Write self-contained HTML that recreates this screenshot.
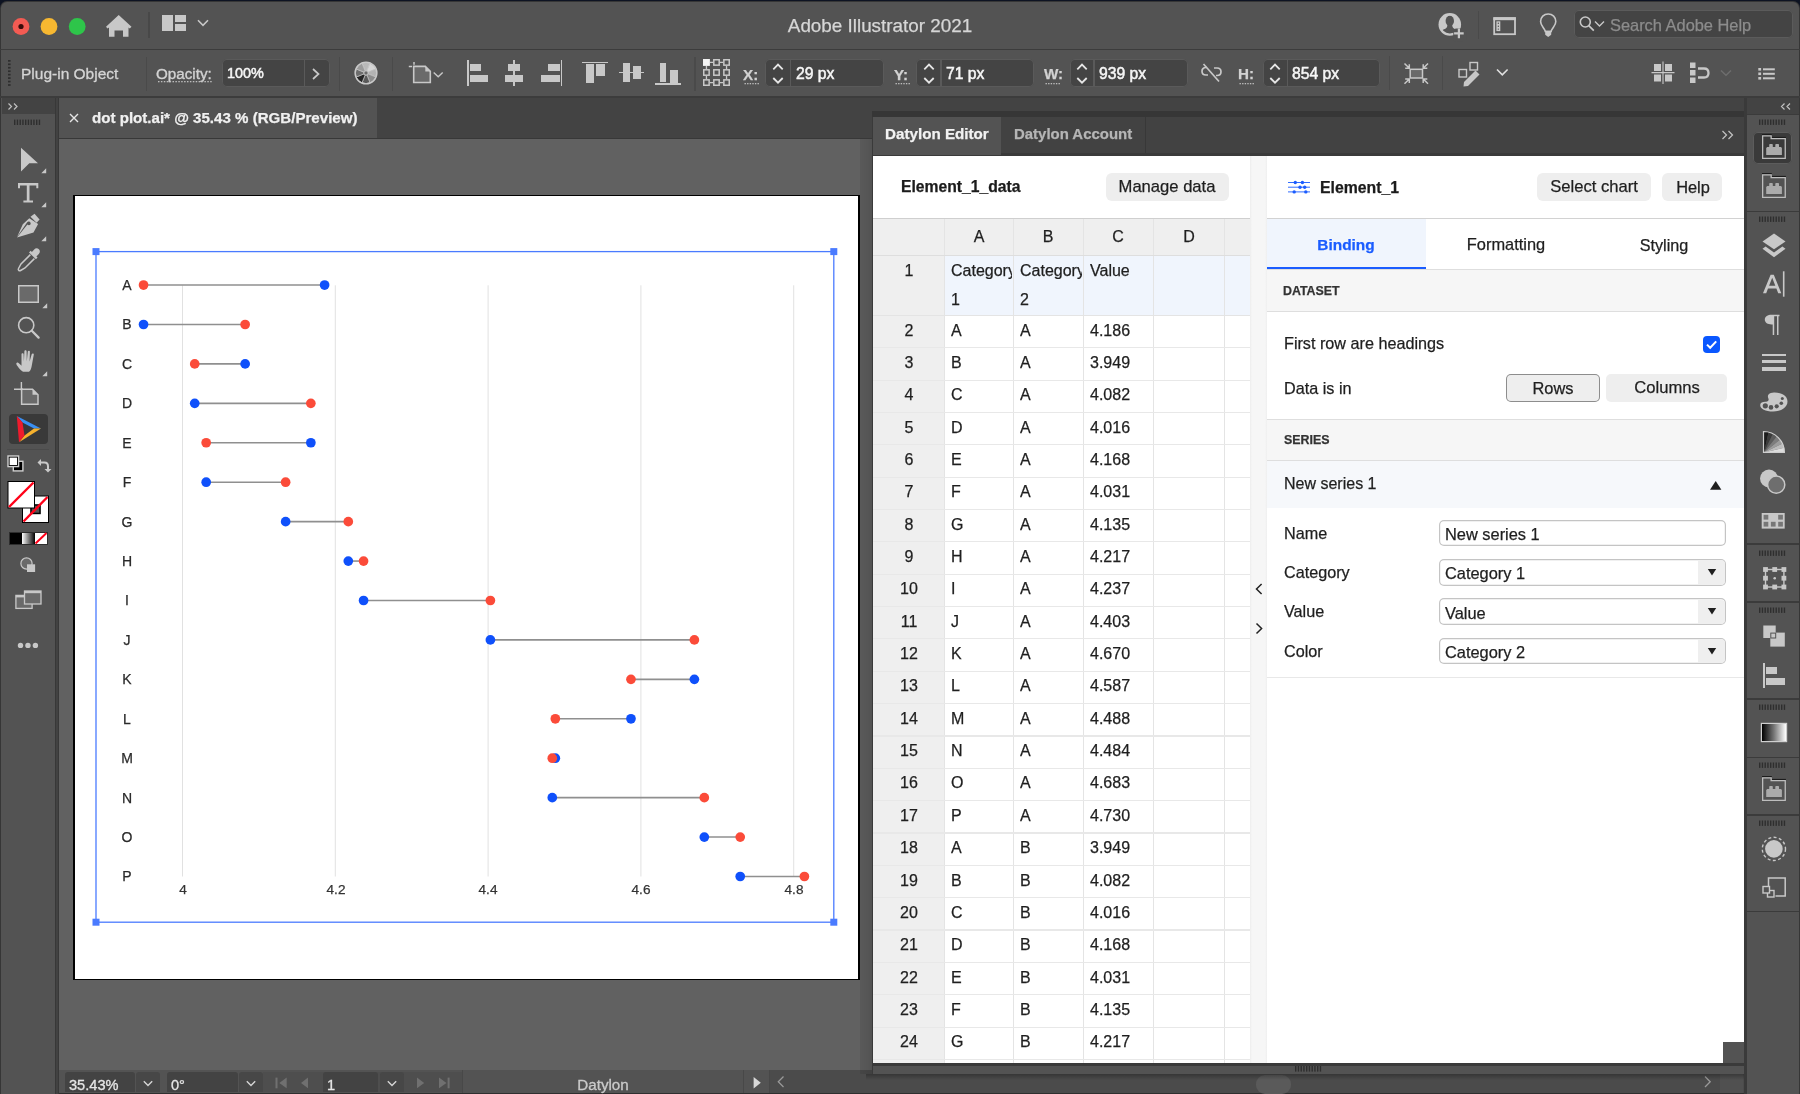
<!DOCTYPE html>
<html><head><meta charset="utf-8"><title>Adobe Illustrator 2021</title>
<style>
html,body{margin:0;padding:0;width:1800px;height:1094px;overflow:hidden;background:#535353;}
body{position:relative;font-family:"Liberation Sans",sans-serif;}
.a{position:absolute;}
.t{line-height:1;white-space:nowrap;will-change:transform;-webkit-text-stroke-width:0.25px;}
svg.a{overflow:visible;}
</style></head><body>
<div class="a" style="left:0.00px;top:0.00px;width:1800.00px;height:1094.00px;background:#0d1322;"></div>
<div class="a" style="left:0.00px;top:1.40px;width:1800.00px;height:1092.60px;background:#363636;border-radius:7px 7px 0 0;"></div>
<div class="a" style="left:1.10px;top:1.60px;width:1797.60px;height:1092.40px;background:#535353;border-radius:6px 6px 0 0;"></div>
<div class="a" style="left:0.00px;top:48.50px;width:1800.00px;height:1.60px;background:#3c3c3c;"></div>
<div class="a" style="left:0.00px;top:96.30px;width:1800.00px;height:1.30px;background:#3c3c3c;"></div>
<div class="a" style="left:58.00px;top:97.50px;width:1688.00px;height:40.50px;background:#434343;"></div>
<div class="a" style="left:55.00px;top:97.50px;width:3.50px;height:997.00px;background:#383838;"></div>
<div class="a" style="left:55.80px;top:97.50px;width:1.90px;height:997.00px;background:#424242;"></div>
<div class="a" style="left:1.50px;top:97.50px;width:53.50px;height:16.50px;background:#434343;"></div>
<div class="a" style="left:58.50px;top:139.00px;width:814.00px;height:931.00px;background:#616161;"></div>
<div class="a" style="left:58.50px;top:137.60px;width:1686.00px;height:1.50px;background:#383838;"></div>
<svg class="a" style="left:0px;top:0px;" width="100" height="50" viewBox="0 0 100 50">
<circle cx="21" cy="26.5" r="8.4" fill="#f35b53"/>
<circle cx="21" cy="26.5" r="2.6" fill="#3a0d0b"/>
<circle cx="49" cy="26.5" r="8.4" fill="#f7b831"/>
<circle cx="77.2" cy="26.5" r="8.4" fill="#2ec54a"/>
</svg>
<svg class="a" style="left:104px;top:12px;" width="32" height="28" viewBox="0 0 32 28">
<path d="M14.7 3 L27.5 14.8 L25.8 16.5 L24.5 15.5 L24.5 24.7 L19 24.7 L19 18.5 L10.5 18.5 L10.5 24.7 L5 24.7 L5 15.5 L3.5 16.5 L2 14.8 Z" fill="#c8c8c8"/>
</svg>
<div class="a" style="left:148.30px;top:11.70px;width:1.30px;height:26.60px;background:#484848;"></div>
<div class="a" style="left:161.70px;top:15.30px;width:11.30px;height:15.50px;background:#c8c8c8;"></div>
<div class="a" style="left:174.80px;top:15.30px;width:11.00px;height:7.10px;background:#c8c8c8;"></div>
<div class="a" style="left:174.80px;top:24.00px;width:11.00px;height:6.80px;background:#c8c8c8;"></div>
<svg class="a" style="left:196px;top:18px;" width="14" height="10" viewBox="0 0 14 10"><path d="M2 2.3 L7 7.3 L12 2.3" stroke="#c8c8c8" stroke-width="1.6" fill="none"/></svg>
<div class="a t" style="left:679.60px;top:17.14px;width:400px;text-align:center;font-size:18.85px;color:#d6d6d6;-webkit-text-stroke:0.25px #d6d6d6;">Adobe Illustrator 2021</div>
<svg class="a" style="left:1436px;top:10px;" width="32" height="32" viewBox="0 0 32 32">
<defs><clipPath id="ucl"><circle cx="13.8" cy="14.4" r="9.1"/></clipPath></defs>
<circle cx="13.8" cy="14.4" r="11.3" fill="#c8c8c8"/>
<g clip-path="url(#ucl)">
<ellipse cx="13.8" cy="10.9" rx="4.2" ry="5.1" fill="#535353"/>
<path d="M11.3 14.5 C11.5 17 11 18.3 7.5 19.6 C5.5 20.3 3.7 21.3 3 24 L3 30 L25 30 L24.6 24 C23.9 21.3 22.1 20.3 20.1 19.6 C16.6 18.3 16.1 17 16.3 14.5 Z" fill="#535353"/>
</g>
<rect x="17.3" y="18.6" width="13" height="13" rx="3" fill="#535353"/>
<path d="M22.9 18.6 V28.2 M18.1 23.4 H27.7" stroke="#c8c8c8" stroke-width="2.2"/>
</svg>
<div class="a" style="left:1477.50px;top:11.00px;width:1.50px;height:27.50px;background:#4a4a4a;"></div>
<svg class="a" style="left:1492px;top:16px;" width="26" height="21" viewBox="0 0 26 21">
<rect x="2.2" y="2.2" width="20.8" height="16" fill="none" stroke="#c8c8c8" stroke-width="1.8"/>
<rect x="1.4" y="1.2" width="22.4" height="3" fill="#c8c8c8"/>
<rect x="4.4" y="5.3" width="3.9" height="9.8" fill="#c8c8c8"/>
<circle cx="6.35" cy="7.3" r="0.7" fill="#535353"/><circle cx="6.35" cy="10.2" r="0.7" fill="#535353"/><circle cx="6.35" cy="13.1" r="0.7" fill="#535353"/>
</svg>
<svg class="a" style="left:1538px;top:12px;" width="20" height="27" viewBox="0 0 20 27">
<path d="M10.2 2 C5.8 2 2.6 5.3 2.6 9.6 C2.6 12.5 4.2 14.2 5.6 16.2 C6.6 17.6 7.3 18.5 7.3 19.5 L13.1 19.5 C13.1 18.5 13.8 17.6 14.8 16.2 C16.2 14.2 17.8 12.5 17.8 9.6 C17.8 5.3 14.6 2 10.2 2 Z" fill="none" stroke="#c8c8c8" stroke-width="1.6"/>
<path d="M7.2 18.8 L13.2 18.8 L13.2 22.8 L10.2 25 L7.2 22.8 Z" fill="#c8c8c8"/>
</svg>
<div class="a" style="left:1574.20px;top:10.30px;width:218.80px;height:28.20px;background:#444444;border-radius:5px;box-shadow:inset 0 0 0 1px #5b5b5b;"></div>
<svg class="a" style="left:1576px;top:12px;" width="32" height="24" viewBox="0 0 32 24">
<circle cx="9.3" cy="10" r="5" fill="none" stroke="#c8c8c8" stroke-width="1.6"/>
<path d="M12.8 13.6 L17.8 18.6" stroke="#c8c8c8" stroke-width="1.7"/>
<path d="M19 9.5 L23.5 14 L28 9.5" fill="none" stroke="#c8c8c8" stroke-width="1.4"/>
</svg>
<div class="a t" style="left:1610.10px;top:17.12px;font-size:16.4px;color:#8c8c8c;-webkit-text-stroke:0.25px #8c8c8c;">Search Adobe Help</div>
<svg class="a" style="left:6px;top:58px;" width="8" height="32" viewBox="0 0 8 32"><rect x="2" y="2.00" width="2.6" height="1.7" fill="#2e2e2e"/><rect x="2" y="5.45" width="2.6" height="1.7" fill="#2e2e2e"/><rect x="2" y="8.90" width="2.6" height="1.7" fill="#2e2e2e"/><rect x="2" y="12.35" width="2.6" height="1.7" fill="#2e2e2e"/><rect x="2" y="15.80" width="2.6" height="1.7" fill="#2e2e2e"/><rect x="2" y="19.25" width="2.6" height="1.7" fill="#2e2e2e"/><rect x="2" y="22.70" width="2.6" height="1.7" fill="#2e2e2e"/><rect x="2" y="26.15" width="2.6" height="1.7" fill="#2e2e2e"/></svg>
<div class="a t" style="left:20.60px;top:66.28px;font-size:15.5px;color:#d4d4d4;-webkit-text-stroke:0.3px #d4d4d4;">Plug-in Object</div>
<div class="a" style="left:145.80px;top:56.70px;width:1.20px;height:34.00px;background:#4a4a4a;"></div>
<div class="a t" style="left:156.40px;top:65.53px;font-size:15.2px;color:#d2d2d2;-webkit-text-stroke:0.35px #d2d2d2;">Opacity:</div>
<svg class="a" style="left:157px;top:80px;" width="58" height="4" viewBox="0 0 58 4"><rect x="1.00" y="1" width="1.5" height="1.3" fill="#bdbdbd"/><rect x="3.90" y="1" width="1.5" height="1.3" fill="#bdbdbd"/><rect x="6.80" y="1" width="1.5" height="1.3" fill="#bdbdbd"/><rect x="9.70" y="1" width="1.5" height="1.3" fill="#bdbdbd"/><rect x="12.60" y="1" width="1.5" height="1.3" fill="#bdbdbd"/><rect x="15.50" y="1" width="1.5" height="1.3" fill="#bdbdbd"/><rect x="18.40" y="1" width="1.5" height="1.3" fill="#bdbdbd"/><rect x="21.30" y="1" width="1.5" height="1.3" fill="#bdbdbd"/><rect x="24.20" y="1" width="1.5" height="1.3" fill="#bdbdbd"/><rect x="27.10" y="1" width="1.5" height="1.3" fill="#bdbdbd"/><rect x="30.00" y="1" width="1.5" height="1.3" fill="#bdbdbd"/><rect x="32.90" y="1" width="1.5" height="1.3" fill="#bdbdbd"/><rect x="35.80" y="1" width="1.5" height="1.3" fill="#bdbdbd"/><rect x="38.70" y="1" width="1.5" height="1.3" fill="#bdbdbd"/><rect x="41.60" y="1" width="1.5" height="1.3" fill="#bdbdbd"/><rect x="44.50" y="1" width="1.5" height="1.3" fill="#bdbdbd"/><rect x="47.40" y="1" width="1.5" height="1.3" fill="#bdbdbd"/><rect x="50.30" y="1" width="1.5" height="1.3" fill="#bdbdbd"/><rect x="53.20" y="1" width="1.5" height="1.3" fill="#bdbdbd"/></svg>
<div class="a" style="left:221.70px;top:59.20px;width:108.00px;height:28.30px;background:#444444;border-radius:5px;box-shadow:inset 0 0 0 1px #5a5a5a;"></div>
<div class="a" style="left:303.50px;top:59.70px;width:1.50px;height:27.30px;background:#5a5a5a;"></div>
<div class="a t" style="left:226.60px;top:66.41px;font-size:14.4px;color:#f6f6f6;-webkit-text-stroke:0.5px #f6f6f6;">100%</div>
<svg class="a" style="left:310px;top:67px;" width="12" height="14" viewBox="0 0 12 14"><path d="M3 2 L8.5 7 L3 12" stroke="#c8c8c8" stroke-width="1.7" fill="none"/></svg>
<div class="a" style="left:338.50px;top:56.70px;width:1.20px;height:34.00px;background:#4a4a4a;"></div>
<svg class="a" style="left:353.5px;top:60.7px;" width="24" height="24" viewBox="0 0 24 24"><path d="M12 12 L7.94 2.21 A10.6 10.6 0 0 1 16.06 2.21 Z" fill="#b8b8b8" stroke="#c9c9c9" stroke-width="0.7"/><path d="M12 12 L16.06 2.21 A10.6 10.6 0 0 1 21.79 7.94 Z" fill="#d6d6d6" stroke="#c9c9c9" stroke-width="0.7"/><path d="M12 12 L21.79 7.94 A10.6 10.6 0 0 1 21.79 16.06 Z" fill="#b3b3b3" stroke="#c9c9c9" stroke-width="0.7"/><path d="M12 12 L21.79 16.06 A10.6 10.6 0 0 1 16.06 21.79 Z" fill="#8c8c8c" stroke="#c9c9c9" stroke-width="0.7"/><path d="M12 12 L16.06 21.79 A10.6 10.6 0 0 1 7.94 21.79 Z" fill="#5a5a5a" stroke="#c9c9c9" stroke-width="0.7"/><path d="M12 12 L7.94 21.79 A10.6 10.6 0 0 1 2.21 16.06 Z" fill="#262626" stroke="#c9c9c9" stroke-width="0.7"/><path d="M12 12 L2.21 16.06 A10.6 10.6 0 0 1 2.21 7.94 Z" fill="#6c6c6c" stroke="#c9c9c9" stroke-width="0.7"/><path d="M12 12 L2.21 7.94 A10.6 10.6 0 0 1 7.94 2.21 Z" fill="#9a9a9a" stroke="#c9c9c9" stroke-width="0.7"/><circle cx="12" cy="12" r="10.9" fill="none" stroke="#c9c9c9" stroke-width="1.4"/><circle cx="12" cy="12" r="2.2" fill="#6a6a6a" stroke="#c9c9c9" stroke-width="1"/></svg>
<div class="a" style="left:392.00px;top:56.70px;width:1.20px;height:34.00px;background:#4a4a4a;"></div>
<svg class="a" style="left:405px;top:58px;" width="44" height="30" viewBox="0 0 44 30">
<path d="M3.8 8.6 H7.1 M9 4 V6.8" stroke="#c8c8c8" stroke-width="1.5"/>
<path d="M8.7 8.4 H20.3 L25.3 13.4 V24.5 H8.7 Z" fill="#6a6a6a" stroke="#c8c8c8" stroke-width="1.6"/>
<path d="M20.3 8.4 V13.4 H25.3" fill="#c8c8c8"/>
<path d="M28.7 14.5 L33.2 18.8 L37.7 14.5" stroke="#c8c8c8" stroke-width="1.4" fill="none"/>
</svg>
<div class="a" style="left:467.00px;top:60.30px;width:1.50px;height:25.50px;background:#c8c8c8;"></div>
<div class="a" style="left:470.00px;top:63.70px;width:11.20px;height:7.10px;background:#c8c8c8;"></div>
<div class="a" style="left:470.00px;top:74.50px;width:18.00px;height:7.20px;background:#c8c8c8;"></div>
<div class="a" style="left:513.10px;top:60.30px;width:1.50px;height:25.50px;background:#c8c8c8;"></div>
<div class="a" style="left:507.80px;top:63.70px;width:12.50px;height:7.10px;background:#c8c8c8;"></div>
<div class="a" style="left:504.70px;top:74.50px;width:18.30px;height:7.20px;background:#c8c8c8;"></div>
<div class="a" style="left:560.90px;top:60.30px;width:1.50px;height:25.50px;background:#c8c8c8;"></div>
<div class="a" style="left:548.30px;top:63.70px;width:11.70px;height:7.10px;background:#c8c8c8;"></div>
<div class="a" style="left:541.00px;top:74.50px;width:19.00px;height:7.20px;background:#c8c8c8;"></div>
<div class="a" style="left:582.00px;top:61.80px;width:25.80px;height:1.50px;background:#c8c8c8;"></div>
<div class="a" style="left:586.00px;top:64.00px;width:7.70px;height:19.00px;background:#c8c8c8;"></div>
<div class="a" style="left:596.00px;top:64.00px;width:8.70px;height:11.80px;background:#c8c8c8;"></div>
<div class="a" style="left:618.70px;top:71.50px;width:25.30px;height:1.50px;background:#c8c8c8;"></div>
<div class="a" style="left:622.80px;top:63.00px;width:7.20px;height:18.70px;background:#c8c8c8;"></div>
<div class="a" style="left:632.80px;top:66.20px;width:8.20px;height:12.60px;background:#c8c8c8;"></div>
<div class="a" style="left:655.00px;top:83.10px;width:25.80px;height:1.50px;background:#c8c8c8;"></div>
<div class="a" style="left:659.70px;top:63.30px;width:6.60px;height:19.00px;background:#c8c8c8;"></div>
<div class="a" style="left:669.50px;top:70.00px;width:8.50px;height:13.00px;background:#c8c8c8;"></div>
<div class="a" style="left:694.40px;top:56.70px;width:1.20px;height:34.00px;background:#4a4a4a;"></div>
<svg class="a" style="left:702px;top:58px;" width="30" height="30" viewBox="0 0 30 30"><rect x="1.00" y="1.00" width="6.9" height="6.9" fill="#f4f4f4"/><rect x="1.75" y="11.80" width="5.4" height="5.4" fill="none" stroke="#c8c8c8" stroke-width="1.5"/><rect x="1.75" y="21.85" width="5.4" height="5.4" fill="none" stroke="#c8c8c8" stroke-width="1.5"/><rect x="11.80" y="1.75" width="5.4" height="5.4" fill="none" stroke="#c8c8c8" stroke-width="1.5"/><rect x="11.80" y="11.80" width="5.4" height="5.4" fill="none" stroke="#c8c8c8" stroke-width="1.5"/><rect x="11.80" y="21.85" width="5.4" height="5.4" fill="none" stroke="#c8c8c8" stroke-width="1.5"/><rect x="21.85" y="1.75" width="5.4" height="5.4" fill="none" stroke="#c8c8c8" stroke-width="1.5"/><rect x="21.85" y="11.80" width="5.4" height="5.4" fill="none" stroke="#c8c8c8" stroke-width="1.5"/><rect x="21.85" y="21.85" width="5.4" height="5.4" fill="none" stroke="#c8c8c8" stroke-width="1.5"/><path d="M7.9 4.45 H11.05 M17.95 4.45 H21.1 M7.9 24.55 H11.05 M17.95 24.55 H21.1 M4.45 7.9 V11.05 M4.45 17.95 V21.1 M24.55 7.9 V11.05 M24.55 17.95 V21.1" stroke="#c8c8c8" stroke-width="1.3"/></svg>
<div class="a t" style="left:743.10px;top:67.23px;font-size:15.2px;color:#d2d2d2;font-weight:bold;">X:</div>
<svg class="a" style="left:744px;top:82px;" width="20" height="4" viewBox="0 0 20 4"><rect x="0.50" y="1" width="1.4" height="1.3" fill="#bdbdbd"/><rect x="3.10" y="1" width="1.4" height="1.3" fill="#bdbdbd"/><rect x="5.70" y="1" width="1.4" height="1.3" fill="#bdbdbd"/><rect x="8.30" y="1" width="1.4" height="1.3" fill="#bdbdbd"/><rect x="10.90" y="1" width="1.4" height="1.3" fill="#bdbdbd"/><rect x="13.50" y="1" width="1.4" height="1.3" fill="#bdbdbd"/></svg>
<div class="a" style="left:765.40px;top:59.30px;width:118.60px;height:28.00px;background:#444444;border-radius:5px;box-shadow:inset 0 0 0 1px #5a5a5a;"></div>
<div class="a" style="left:789.75px;top:59.80px;width:1.50px;height:27.00px;background:#5a5a5a;"></div>
<svg class="a" style="left:770.95px;top:62.3px;" width="14" height="24" viewBox="0 0 14 24"><path d="M2.3 7.3 L7 2.6 L11.7 7.3 M2.3 16 L7 20.7 L11.7 16" stroke="#e6e6e6" stroke-width="1.8" fill="none"/></svg>
<div class="a t" style="left:795.60px;top:66.21px;font-size:15.7px;color:#f6f6f6;-webkit-text-stroke:0.5px #f6f6f6;">29 px</div>
<div class="a t" style="left:893.60px;top:67.23px;font-size:15.2px;color:#d2d2d2;font-weight:bold;">Y:</div>
<svg class="a" style="left:894.5px;top:82px;" width="20" height="4" viewBox="0 0 20 4"><rect x="0.50" y="1" width="1.4" height="1.3" fill="#bdbdbd"/><rect x="3.10" y="1" width="1.4" height="1.3" fill="#bdbdbd"/><rect x="5.70" y="1" width="1.4" height="1.3" fill="#bdbdbd"/><rect x="8.30" y="1" width="1.4" height="1.3" fill="#bdbdbd"/><rect x="10.90" y="1" width="1.4" height="1.3" fill="#bdbdbd"/><rect x="13.50" y="1" width="1.4" height="1.3" fill="#bdbdbd"/></svg>
<div class="a" style="left:916.10px;top:59.30px;width:118.10px;height:28.00px;background:#444444;border-radius:5px;box-shadow:inset 0 0 0 1px #5a5a5a;"></div>
<div class="a" style="left:940.25px;top:59.80px;width:1.50px;height:27.00px;background:#5a5a5a;"></div>
<svg class="a" style="left:921.55px;top:62.3px;" width="14" height="24" viewBox="0 0 14 24"><path d="M2.3 7.3 L7 2.6 L11.7 7.3 M2.3 16 L7 20.7 L11.7 16" stroke="#e6e6e6" stroke-width="1.8" fill="none"/></svg>
<div class="a t" style="left:946.10px;top:66.21px;font-size:15.7px;color:#f6f6f6;-webkit-text-stroke:0.5px #f6f6f6;">71 px</div>
<div class="a t" style="left:1043.60px;top:66.27px;font-size:15.2px;color:#d2d2d2;font-weight:bold;">W:</div>
<svg class="a" style="left:1044.5px;top:82px;" width="20" height="4" viewBox="0 0 20 4"><rect x="0.50" y="1" width="1.4" height="1.3" fill="#bdbdbd"/><rect x="3.10" y="1" width="1.4" height="1.3" fill="#bdbdbd"/><rect x="5.70" y="1" width="1.4" height="1.3" fill="#bdbdbd"/><rect x="8.30" y="1" width="1.4" height="1.3" fill="#bdbdbd"/><rect x="10.90" y="1" width="1.4" height="1.3" fill="#bdbdbd"/><rect x="13.50" y="1" width="1.4" height="1.3" fill="#bdbdbd"/></svg>
<div class="a" style="left:1069.50px;top:58.50px;width:118.00px;height:28.00px;background:#444444;border-radius:5px;box-shadow:inset 0 0 0 1px #5a5a5a;"></div>
<div class="a" style="left:1093.45px;top:59.00px;width:1.50px;height:27.00px;background:#5a5a5a;"></div>
<svg class="a" style="left:1074.85px;top:61.5px;" width="14" height="24" viewBox="0 0 14 24"><path d="M2.3 7.3 L7 2.6 L11.7 7.3 M2.3 16 L7 20.7 L11.7 16" stroke="#e6e6e6" stroke-width="1.8" fill="none"/></svg>
<div class="a t" style="left:1099.10px;top:66.21px;font-size:15.7px;color:#f6f6f6;-webkit-text-stroke:0.5px #f6f6f6;">939 px</div>
<div class="a t" style="left:1238.10px;top:66.27px;font-size:15.2px;color:#d2d2d2;font-weight:bold;">H:</div>
<svg class="a" style="left:1239px;top:82px;" width="20" height="4" viewBox="0 0 20 4"><rect x="0.50" y="1" width="1.4" height="1.3" fill="#bdbdbd"/><rect x="3.10" y="1" width="1.4" height="1.3" fill="#bdbdbd"/><rect x="5.70" y="1" width="1.4" height="1.3" fill="#bdbdbd"/><rect x="8.30" y="1" width="1.4" height="1.3" fill="#bdbdbd"/><rect x="10.90" y="1" width="1.4" height="1.3" fill="#bdbdbd"/><rect x="13.50" y="1" width="1.4" height="1.3" fill="#bdbdbd"/></svg>
<div class="a" style="left:1262.80px;top:58.50px;width:117.20px;height:28.00px;background:#444444;border-radius:5px;box-shadow:inset 0 0 0 1px #5a5a5a;"></div>
<div class="a" style="left:1286.75px;top:59.00px;width:1.50px;height:27.00px;background:#5a5a5a;"></div>
<svg class="a" style="left:1268.15px;top:61.5px;" width="14" height="24" viewBox="0 0 14 24"><path d="M2.3 7.3 L7 2.6 L11.7 7.3 M2.3 16 L7 20.7 L11.7 16" stroke="#e6e6e6" stroke-width="1.8" fill="none"/></svg>
<div class="a t" style="left:1291.90px;top:66.21px;font-size:15.7px;color:#f6f6f6;-webkit-text-stroke:0.5px #f6f6f6;">854 px</div>
<svg class="a" style="left:1199px;top:61px;" width="26" height="24" viewBox="0 0 26 24">
<path d="M8 6.5 H7 C4.2 6.5 3 8.3 3 10.3 C3 12.3 4.2 14 7 14 H9" fill="none" stroke="#c8c8c8" stroke-width="1.7"/>
<path d="M15 7 H18 C20.8 7 22 8.8 22 10.8 C22 12.8 20.8 14.5 18 14.5 H17" fill="none" stroke="#c8c8c8" stroke-width="1.7"/>
<path d="M4.5 3 L20 20.5" stroke="#c8c8c8" stroke-width="1.7"/>
</svg>
<div class="a" style="left:1388.70px;top:56.00px;width:1.20px;height:34.00px;background:#4a4a4a;"></div>
<svg class="a" style="left:1402px;top:61px;" width="30" height="26" viewBox="0 0 30 26">
<rect x="8.2" y="8.3" width="12.3" height="8.7" fill="#6a6a6a" stroke="#c8c8c8" stroke-width="1.5"/>
<path d="M2.5 2.5 L7.3 7.3 M7.3 3.2 V7.3 H3.2 M26 2.5 L21.2 7.3 M21.2 3.2 V7.3 H25.3 M2.5 22.8 L7.3 18 M7.3 22.1 V18 H3.2 M26 22.8 L21.2 18 M21.2 22.1 V18 H25.3" stroke="#c8c8c8" stroke-width="1.5" fill="none"/>
</svg>
<div class="a" style="left:1442.00px;top:56.00px;width:1.20px;height:34.00px;background:#4a4a4a;"></div>
<svg class="a" style="left:1456px;top:60px;" width="30" height="28" viewBox="0 0 30 28">
<rect x="3" y="9.5" width="7.5" height="7.5" fill="none" stroke="#c8c8c8" stroke-width="1.4"/>
<rect x="14" y="2.5" width="7.5" height="7.5" fill="none" stroke="#c8c8c8" stroke-width="1.4"/>
<path d="M8 22 L19.5 10.5 L23.5 14.5 L12 26 L7.5 26.5 Z" fill="#c8c8c8"/>
</svg>
<svg class="a" style="left:1495px;top:67px;" width="16" height="10" viewBox="0 0 16 10"><path d="M2 2.5 L7.3 7.8 L12.6 2.5" stroke="#e0e0e0" stroke-width="1.6" fill="none"/></svg>
<svg class="a" style="left:1650px;top:60px;" width="26" height="26" viewBox="0 0 26 26">
<path d="M13 1.5 V24 M1.5 12.6 H24.5" stroke="#c8c8c8" stroke-width="1.1"/>
<rect x="4" y="4" width="7" height="7" fill="#c8c8c8"/><rect x="15" y="4" width="7" height="7" fill="#c8c8c8"/>
<rect x="4" y="14.5" width="7" height="7" fill="#c8c8c8"/><rect x="15" y="14.5" width="7" height="7" fill="#c8c8c8"/>
</svg>
<svg class="a" style="left:1688px;top:60px;" width="26" height="26" viewBox="0 0 26 26">
<rect x="2" y="2.5" width="5.5" height="5.5" fill="#c8c8c8"/><rect x="2" y="10" width="5.5" height="5.5" fill="#c8c8c8"/><rect x="2" y="17.5" width="5.5" height="5.5" fill="#c8c8c8"/>
<path d="M10 8.5 H16 C19 8.5 20.5 10.5 20.5 13 C20.5 15.5 19 17.5 16 17.5 H10" fill="none" stroke="#c8c8c8" stroke-width="2.3"/>
</svg>
<svg class="a" style="left:1719px;top:68px;" width="14" height="10" viewBox="0 0 14 10"><path d="M2 2.5 L7 7.3 L12 2.5" stroke="#6e6e6e" stroke-width="1.4" fill="none"/></svg>
<svg class="a" style="left:1756px;top:66px;" width="22" height="16" viewBox="0 0 22 16">
<rect x="2.3" y="2" width="2.8" height="2.6" fill="#c8c8c8"/><rect x="2.3" y="6.5" width="2.8" height="2.6" fill="#c8c8c8"/><rect x="2.3" y="11" width="2.8" height="2.6" fill="#c8c8c8"/>
<rect x="7" y="2.3" width="11.8" height="2" fill="#c8c8c8"/><rect x="7" y="6.8" width="11.8" height="2" fill="#c8c8c8"/><rect x="7" y="11.3" width="11.8" height="2" fill="#c8c8c8"/>
</svg>
<svg class="a" style="left:6px;top:101px;" width="14" height="10" viewBox="0 0 14 10"><path d="M2.5 2.5 L5.5 5.5 L2.5 8.5 M8 2.5 L11 5.5 L8 8.5" stroke="#c0c0c0" stroke-width="1.2" fill="none"/></svg>
<svg class="a" style="left:13px;top:118px;" width="30" height="8" viewBox="0 0 30 8"><rect x="1.00" y="1.6" width="1.4" height="5.4" fill="#2e2e2e"/><rect x="3.75" y="1.6" width="1.4" height="5.4" fill="#2e2e2e"/><rect x="6.50" y="1.6" width="1.4" height="5.4" fill="#2e2e2e"/><rect x="9.25" y="1.6" width="1.4" height="5.4" fill="#2e2e2e"/><rect x="12.00" y="1.6" width="1.4" height="5.4" fill="#2e2e2e"/><rect x="14.75" y="1.6" width="1.4" height="5.4" fill="#2e2e2e"/><rect x="17.50" y="1.6" width="1.4" height="5.4" fill="#2e2e2e"/><rect x="20.25" y="1.6" width="1.4" height="5.4" fill="#2e2e2e"/><rect x="23.00" y="1.6" width="1.4" height="5.4" fill="#2e2e2e"/><rect x="25.75" y="1.6" width="1.4" height="5.4" fill="#2e2e2e"/></svg>
<svg class="a" style="left:18px;top:145px;" width="24" height="30" viewBox="0 0 24 30"><path d="M3 2.7 L20 18.2 L11.3 18.2 L3 26.4 Z" fill="#c8c8c8"/></svg>
<svg class="a" style="left:41.2px;top:167.8px;" width="6" height="6" viewBox="0 0 6 6"><path d="M5.2 0.3 V5.2 H0.3 Z" fill="#c8c8c8"/></svg>
<svg class="a" style="left:15px;top:180px;" width="26" height="26" viewBox="0 0 26 26">
<path d="M3 3 H23.3 V8.3 H21.3 V5.4 H14.5 V20.6 H18 V22.6 H8.4 V20.6 H11.8 V5.4 H5 V8.3 H3 Z" fill="#c8c8c8"/>
</svg>
<svg class="a" style="left:41.2px;top:201.8px;" width="6" height="6" viewBox="0 0 6 6"><path d="M5.2 0.3 V5.2 H0.3 Z" fill="#c8c8c8"/></svg>
<svg class="a" style="left:14px;top:212px;" width="28" height="28" viewBox="0 0 28 28">
<path d="M16.5 4.8 L20.5 1.8 L25.6 7.6 L22.6 10.8 Z" fill="#c8c8c8"/>
<path d="M15.3 6.2 L24.1 12 L19.5 20.6 L3 25.5 L13.4 12.5 C14.3 13.4 15.5 13.4 16.2 12.7 C17 11.9 16.8 10.6 15.9 9.9 C15 9.2 13.9 9.4 13.2 10.2 L3.2 24.8 L8.8 12.3 Z" fill="#c8c8c8"/>
</svg>
<svg class="a" style="left:41.2px;top:235.8px;" width="6" height="6" viewBox="0 0 6 6"><path d="M5.2 0.3 V5.2 H0.3 Z" fill="#c8c8c8"/></svg>
<svg class="a" style="left:14px;top:246px;" width="28" height="28" viewBox="0 0 28 28">
<path d="M20.2 3.4 C21.6 2 23.6 2 24.9 3.3 C26.2 4.6 26.2 6.6 24.8 8 L22.4 10.4 L23.6 11.6 L21.9 13.3 L15 6.4 L16.7 4.7 L17.9 5.9 Z" fill="#c8c8c8"/>
<path d="M16.4 8.6 L7 18 L4.5 22.5 C3.7 23.9 5.3 25.3 6.6 24.5 L11 22 L20.4 12.6" fill="none" stroke="#c8c8c8" stroke-width="1.5"/>
</svg>
<div class="a" style="left:17.60px;top:284.60px;width:21.40px;height:18.60px;background:#6a6a6a;box-shadow:inset 0 0 0 1.5px #c8c8c8;"></div>
<svg class="a" style="left:41.5px;top:302.8px;" width="6" height="6" viewBox="0 0 6 6"><path d="M5.2 0.3 V5.2 H0.3 Z" fill="#c8c8c8"/></svg>
<svg class="a" style="left:14px;top:314px;" width="28" height="28" viewBox="0 0 28 28">
<circle cx="12.2" cy="11.2" r="7.6" fill="none" stroke="#c8c8c8" stroke-width="1.6"/>
<path d="M17.8 16.8 L24.6 23.6" stroke="#c8c8c8" stroke-width="2.3" stroke-linecap="round"/>
</svg>
<svg class="a" style="left:14px;top:347px;" width="28" height="28" viewBox="0 0 28 28">
<path d="M9 24.8 C6.5 23 3.2 19.5 2.4 17.3 C2 16 3 15.2 4.2 15.8 C5.5 16.5 6.6 18 7.5 18.8 L7.5 7.2 C7.5 6 9.6 6 9.6 7.2 L9.9 14.5 L10.4 4.3 C10.4 3 12.6 3 12.6 4.3 L12.8 14.3 L13.8 4.6 C13.9 3.4 16 3.5 15.9 4.8 L15.6 14.6 L17.7 7.2 C18 6 20.1 6.3 19.8 7.6 L17.9 18 C17.4 21.5 16.5 23.5 15 24.8 Z" fill="#c8c8c8"/>
</svg>
<svg class="a" style="left:41.5px;top:370.5px;" width="6" height="6" viewBox="0 0 6 6"><path d="M5.2 0.3 V5.2 H0.3 Z" fill="#c8c8c8"/></svg>
<svg class="a" style="left:12px;top:380px;" width="30" height="28" viewBox="0 0 30 28">
<path d="M2 9.3 H11 M9.4 2 V10.6" stroke="#c8c8c8" stroke-width="1.4"/>
<path d="M9.6 9.2 H20.5 L26 14.7 V24.3 H9.6 Z" fill="#6a6a6a" stroke="#c8c8c8" stroke-width="1.5"/>
<path d="M20.5 9.2 V14.7 H26" fill="#c8c8c8"/>
</svg>
<div class="a" style="left:8.80px;top:413.50px;width:38.80px;height:30.70px;background:#393939;border-radius:4px;"></div>
<svg class="a" style="left:14px;top:414px;" width="30" height="30" viewBox="0 0 30 30">
<path d="M2.8 2 L27 14.4 L20 14.5 L8.5 8.5 Z" fill="#3a8ff2"/>
<path d="M27 14.4 L5 28.3 L10.5 21.5 L20 14.5 Z" fill="#f6b12d"/>
<path d="M2.8 2 L8.5 8.5 L10.5 21.5 L5 28.3 Z" fill="#ef1b2d"/>
</svg>
<div class="a" style="left:7.00px;top:448.50px;width:42.00px;height:1.00px;background:#4b4b4b;"></div>
<svg class="a" style="left:6px;top:454px;" width="20" height="20" viewBox="0 0 20 20">
<rect x="7.3" y="7.3" width="9.6" height="9.6" fill="#000" stroke="#d0d0d0" stroke-width="1.4"/>
<rect x="2" y="2" width="10.6" height="10.6" fill="#000" stroke="#d0d0d0" stroke-width="1.4"/>
<rect x="3.6" y="3.6" width="7.4" height="7.4" fill="#fff"/>
</svg>
<svg class="a" style="left:34px;top:455px;" width="20" height="20" viewBox="0 0 20 20">
<path d="M3.5 7.5 L7 4 L7 11 Z" fill="#c8c8c8"/>
<path d="M6.5 7.5 H10.5 C13 7.5 14 9 14 11.3 V14.5" fill="none" stroke="#c8c8c8" stroke-width="2"/>
<path d="M10.5 14 L14 17.5 L17.5 14 Z" fill="#c8c8c8"/>
</svg>
<svg class="a" style="left:7px;top:481px;" width="44" height="44" viewBox="0 0 44 44">
<rect x="15" y="14.5" width="27" height="27.5" fill="#000"/>
<rect x="16" y="15.5" width="25" height="25.5" fill="#fff"/>
<rect x="23.2" y="23.2" width="10.6" height="10" fill="#000"/>
<rect x="24.7" y="24.7" width="7.6" height="7" fill="#535353"/>
<path d="M16.5 40.5 L40.5 16" stroke="#ff0018" stroke-width="2.4"/>

<rect x="0.5" y="0" width="27.5" height="27.5" fill="#000"/>
<rect x="1.5" y="1" width="25.5" height="25.5" fill="#fff"/>
<path d="M2 26 L26.5 1.5" stroke="#ff0018" stroke-width="2.4"/>
</svg>
<div class="a" style="left:8.80px;top:532.30px;width:38.80px;height:12.50px;background:#2e2e2e;"></div>
<div class="a" style="left:9.80px;top:533.30px;width:12.20px;height:10.50px;background:#000;"></div>
<div class="a" style="left:22.00px;top:533.30px;width:12.60px;height:10.50px;background:linear-gradient(90deg,#fff,#000);"></div>
<div class="a" style="left:34.80px;top:533.30px;width:11.80px;height:10.50px;background:#fff;"></div>
<svg class="a" style="left:34.8px;top:533.3px;" width="12" height="11" viewBox="0 0 12 11"><path d="M0.5 10.5 L11.5 0" stroke="#ff0018" stroke-width="2"/></svg>
<svg class="a" style="left:19px;top:556px;" width="20" height="20" viewBox="0 0 20 20">
<circle cx="7.5" cy="7.5" r="5.6" fill="#6a6a6a" stroke="#c8c8c8" stroke-width="1.2"/>
<rect x="8" y="8.3" width="8.1" height="7.7" fill="#c8c8c8"/>
</svg>
<svg class="a" style="left:14px;top:589px;" width="30" height="22" viewBox="0 0 30 22">
<rect x="1.9" y="6.4" width="16.2" height="13" fill="#6a6a6a" stroke="#c8c8c8" stroke-width="1.3"/>
<rect x="1.9" y="6.4" width="16.2" height="2" fill="#c8c8c8"/>
<rect x="10.5" y="2" width="16.5" height="13" fill="#6a6a6a" stroke="#c8c8c8" stroke-width="1.3"/>
<rect x="10.5" y="2" width="16.5" height="2.2" fill="#c8c8c8"/>
</svg>
<svg class="a" style="left:14px;top:640px;" width="30" height="12" viewBox="0 0 30 12"><circle cx="6.50" cy="5.4" r="2.7" fill="#c8c8c8"/><circle cx="13.95" cy="5.4" r="2.7" fill="#c8c8c8"/><circle cx="21.40" cy="5.4" r="2.7" fill="#c8c8c8"/></svg>
<div class="a" style="left:73.40px;top:194.90px;width:786.60px;height:785.60px;background:#000;"></div>
<div class="a" style="left:75.00px;top:196.40px;width:783.40px;height:782.60px;background:#fff;"></div>
<div class="a" style="left:59.00px;top:98.00px;width:318.20px;height:39.60px;background:#535353;"></div>
<svg class="a" style="left:67px;top:111px;" width="14" height="14" viewBox="0 0 14 14"><path d="M3 3 L11 11 M11 3 L3 11" stroke="#e6e6e6" stroke-width="1.4"/></svg>
<div class="a t" style="left:91.90px;top:110.02px;font-size:15.1px;color:#f0f0f0;font-weight:bold;">dot plot.ai* @ 35.43 % (RGB/Preview)</div>
<svg class="a" style="left:0px;top:0px;pointer-events:none;" width="1800" height="1094" viewBox="0 0 1800 1094"><rect x="182.00" y="285.3" width="1" height="591.2" fill="#e1e1e1"/><rect x="334.80" y="285.3" width="1" height="591.2" fill="#e1e1e1"/><rect x="487.60" y="285.3" width="1" height="591.2" fill="#e1e1e1"/><rect x="640.40" y="285.3" width="1" height="591.2" fill="#e1e1e1"/><rect x="793.20" y="285.3" width="1" height="591.2" fill="#e1e1e1"/><line x1="143.54" y1="285.05" x2="324.60" y2="285.05" stroke="#8f8f8f" stroke-width="1.6"/><circle cx="324.60" cy="285.05" r="4.85" fill="#0f50fb"/><circle cx="143.54" cy="285.05" r="4.85" fill="#fb4b39"/><line x1="143.54" y1="324.48" x2="245.15" y2="324.48" stroke="#8f8f8f" stroke-width="1.6"/><circle cx="143.54" cy="324.48" r="4.85" fill="#0f50fb"/><circle cx="245.15" cy="324.48" r="4.85" fill="#fb4b39"/><line x1="194.72" y1="363.91" x2="245.15" y2="363.91" stroke="#8f8f8f" stroke-width="1.6"/><circle cx="245.15" cy="363.91" r="4.85" fill="#0f50fb"/><circle cx="194.72" cy="363.91" r="4.85" fill="#fb4b39"/><line x1="194.72" y1="403.34" x2="310.85" y2="403.34" stroke="#8f8f8f" stroke-width="1.6"/><circle cx="194.72" cy="403.34" r="4.85" fill="#0f50fb"/><circle cx="310.85" cy="403.34" r="4.85" fill="#fb4b39"/><line x1="206.18" y1="442.77" x2="310.85" y2="442.77" stroke="#8f8f8f" stroke-width="1.6"/><circle cx="310.85" cy="442.77" r="4.85" fill="#0f50fb"/><circle cx="206.18" cy="442.77" r="4.85" fill="#fb4b39"/><line x1="206.18" y1="482.20" x2="285.64" y2="482.20" stroke="#8f8f8f" stroke-width="1.6"/><circle cx="206.18" cy="482.20" r="4.85" fill="#0f50fb"/><circle cx="285.64" cy="482.20" r="4.85" fill="#fb4b39"/><line x1="285.64" y1="521.63" x2="348.29" y2="521.63" stroke="#8f8f8f" stroke-width="1.6"/><circle cx="285.64" cy="521.63" r="4.85" fill="#0f50fb"/><circle cx="348.29" cy="521.63" r="4.85" fill="#fb4b39"/><line x1="348.29" y1="561.06" x2="363.57" y2="561.06" stroke="#8f8f8f" stroke-width="1.6"/><circle cx="348.29" cy="561.06" r="4.85" fill="#0f50fb"/><circle cx="363.57" cy="561.06" r="4.85" fill="#fb4b39"/><line x1="363.57" y1="600.49" x2="490.39" y2="600.49" stroke="#8f8f8f" stroke-width="1.6"/><circle cx="363.57" cy="600.49" r="4.85" fill="#0f50fb"/><circle cx="490.39" cy="600.49" r="4.85" fill="#fb4b39"/><line x1="490.39" y1="639.92" x2="694.38" y2="639.92" stroke="#8f8f8f" stroke-width="1.6"/><circle cx="490.39" cy="639.92" r="4.85" fill="#0f50fb"/><circle cx="694.38" cy="639.92" r="4.85" fill="#fb4b39"/><line x1="630.97" y1="679.35" x2="694.38" y2="679.35" stroke="#8f8f8f" stroke-width="1.6"/><circle cx="694.38" cy="679.35" r="4.85" fill="#0f50fb"/><circle cx="630.97" cy="679.35" r="4.85" fill="#fb4b39"/><line x1="555.33" y1="718.78" x2="630.97" y2="718.78" stroke="#8f8f8f" stroke-width="1.6"/><circle cx="630.97" cy="718.78" r="4.85" fill="#0f50fb"/><circle cx="555.33" cy="718.78" r="4.85" fill="#fb4b39"/><line x1="552.28" y1="758.21" x2="555.33" y2="758.21" stroke="#8f8f8f" stroke-width="1.6"/><circle cx="555.33" cy="758.21" r="4.85" fill="#0f50fb"/><circle cx="552.28" cy="758.21" r="4.85" fill="#fb4b39"/><line x1="552.28" y1="797.64" x2="704.31" y2="797.64" stroke="#8f8f8f" stroke-width="1.6"/><circle cx="552.28" cy="797.64" r="4.85" fill="#0f50fb"/><circle cx="704.31" cy="797.64" r="4.85" fill="#fb4b39"/><line x1="704.31" y1="837.07" x2="740.22" y2="837.07" stroke="#8f8f8f" stroke-width="1.6"/><circle cx="704.31" cy="837.07" r="4.85" fill="#0f50fb"/><circle cx="740.22" cy="837.07" r="4.85" fill="#fb4b39"/><line x1="740.22" y1="876.50" x2="804.40" y2="876.50" stroke="#8f8f8f" stroke-width="1.6"/><circle cx="740.22" cy="876.50" r="4.85" fill="#0f50fb"/><circle cx="804.40" cy="876.50" r="4.85" fill="#fb4b39"/><rect x="96" y="251.6" width="737.8" height="670.6" fill="none" stroke="#4a7bff" stroke-width="1.3"/><rect x="92.50" y="248.10" width="7" height="7" fill="#4a7bff"/><rect x="830.30" y="248.10" width="7" height="7" fill="#4a7bff"/><rect x="92.50" y="918.70" width="7" height="7" fill="#4a7bff"/><rect x="830.30" y="918.70" width="7" height="7" fill="#4a7bff"/></svg>
<div class="a t" style="left:112.10px;top:277.95px;width:30px;text-align:center;font-size:14px;color:#2a2a2a;">A</div>
<div class="a t" style="left:112.10px;top:317.38px;width:30px;text-align:center;font-size:14px;color:#2a2a2a;">B</div>
<div class="a t" style="left:112.10px;top:356.81px;width:30px;text-align:center;font-size:14px;color:#2a2a2a;">C</div>
<div class="a t" style="left:112.10px;top:396.24px;width:30px;text-align:center;font-size:14px;color:#2a2a2a;">D</div>
<div class="a t" style="left:112.10px;top:435.67px;width:30px;text-align:center;font-size:14px;color:#2a2a2a;">E</div>
<div class="a t" style="left:112.10px;top:475.10px;width:30px;text-align:center;font-size:14px;color:#2a2a2a;">F</div>
<div class="a t" style="left:112.10px;top:514.53px;width:30px;text-align:center;font-size:14px;color:#2a2a2a;">G</div>
<div class="a t" style="left:112.10px;top:553.96px;width:30px;text-align:center;font-size:14px;color:#2a2a2a;">H</div>
<div class="a t" style="left:112.10px;top:593.39px;width:30px;text-align:center;font-size:14px;color:#2a2a2a;">I</div>
<div class="a t" style="left:112.10px;top:632.82px;width:30px;text-align:center;font-size:14px;color:#2a2a2a;">J</div>
<div class="a t" style="left:112.10px;top:672.25px;width:30px;text-align:center;font-size:14px;color:#2a2a2a;">K</div>
<div class="a t" style="left:112.10px;top:711.68px;width:30px;text-align:center;font-size:14px;color:#2a2a2a;">L</div>
<div class="a t" style="left:112.10px;top:751.11px;width:30px;text-align:center;font-size:14px;color:#2a2a2a;">M</div>
<div class="a t" style="left:112.10px;top:790.54px;width:30px;text-align:center;font-size:14px;color:#2a2a2a;">N</div>
<div class="a t" style="left:112.10px;top:829.97px;width:30px;text-align:center;font-size:14px;color:#2a2a2a;">O</div>
<div class="a t" style="left:112.10px;top:869.40px;width:30px;text-align:center;font-size:14px;color:#2a2a2a;">P</div>
<div class="a t" style="left:162.80px;top:882.69px;width:40px;text-align:center;font-size:13.6px;color:#333333;">4</div>
<div class="a t" style="left:315.60px;top:882.69px;width:40px;text-align:center;font-size:13.6px;color:#333333;">4.2</div>
<div class="a t" style="left:468.40px;top:882.69px;width:40px;text-align:center;font-size:13.6px;color:#333333;">4.4</div>
<div class="a t" style="left:621.20px;top:882.69px;width:40px;text-align:center;font-size:13.6px;color:#333333;">4.6</div>
<div class="a t" style="left:774.00px;top:882.69px;width:40px;text-align:center;font-size:13.6px;color:#333333;">4.8</div>
<div class="a" style="left:58.50px;top:1069.70px;width:1686.00px;height:24.30px;background:#535353;"></div>
<div class="a" style="left:58.50px;top:1092.50px;width:1686.00px;height:1.50px;background:#2f2f2f;"></div>
<div class="a" style="left:64.70px;top:1071.70px;width:70.30px;height:20.80px;background:#434343;border-radius:3px 3px 0 0;"></div>
<div class="a" style="left:136.00px;top:1071.70px;width:24.00px;height:20.80px;background:#474747;border-radius:3px 3px 0 0;"></div>
<svg class="a" style="left:141.8px;top:1079px;" width="12" height="10" viewBox="0 0 12 10"><path d="M1.8 2.3 L6 6.5 L10.2 2.3" stroke="#d6d6d6" stroke-width="1.4" fill="none"/></svg>
<div class="a t" style="left:68.60px;top:1077.64px;font-size:14.6px;color:#e6e6e6;-webkit-text-stroke:0.3px #e6e6e6;">35.43%</div>
<div class="a" style="left:167.00px;top:1071.70px;width:70.70px;height:20.80px;background:#434343;border-radius:3px 3px 0 0;"></div>
<div class="a" style="left:239.00px;top:1071.70px;width:23.70px;height:20.80px;background:#474747;border-radius:3px 3px 0 0;"></div>
<svg class="a" style="left:244.5px;top:1079px;" width="12" height="10" viewBox="0 0 12 10"><path d="M1.8 2.3 L6 6.5 L10.2 2.3" stroke="#d6d6d6" stroke-width="1.4" fill="none"/></svg>
<div class="a t" style="left:170.80px;top:1077.64px;font-size:14.6px;color:#e6e6e6;-webkit-text-stroke:0.3px #e6e6e6;">0°</div>
<div class="a" style="left:263.00px;top:1071.70px;width:199.00px;height:20.80px;background:#4e4e4e;"></div>
<svg class="a" style="left:272px;top:1075px;" width="40" height="16" viewBox="0 0 40 16"><rect x="3.5" y="2.6" width="2" height="10.7" fill="#707070"/><path d="M14.7 2.6 V13.3 L7.3 8 Z" fill="#707070"/><path d="M36 2.6 V13.3 L29 8 Z" fill="#707070"/></svg>
<div class="a" style="left:322.50px;top:1071.70px;width:55.70px;height:20.80px;background:#434343;border-radius:3px 3px 0 0;"></div>
<div class="a" style="left:380.30px;top:1071.70px;width:23.50px;height:20.80px;background:#474747;border-radius:3px 3px 0 0;"></div>
<svg class="a" style="left:386px;top:1079px;" width="12" height="10" viewBox="0 0 12 10"><path d="M1.8 2.3 L6 6.5 L10.2 2.3" stroke="#d6d6d6" stroke-width="1.4" fill="none"/></svg>
<div class="a t" style="left:326.70px;top:1077.64px;font-size:14.6px;color:#e6e6e6;-webkit-text-stroke:0.3px #e6e6e6;">1</div>
<svg class="a" style="left:414px;top:1075px;" width="40" height="16" viewBox="0 0 40 16"><path d="M3 2.6 V13.3 L10.2 8 Z" fill="#707070"/><path d="M25 2.6 V13.3 L32.5 8 Z" fill="#707070"/><rect x="33.6" y="2.6" width="2" height="10.7" fill="#707070"/></svg>
<div class="a" style="left:462.00px;top:1070.00px;width:1.20px;height:22.50px;background:#484848;"></div>
<div class="a t" style="left:502.90px;top:1076.93px;width:200px;text-align:center;font-size:15.2px;color:#cacaca;-webkit-text-stroke:0.3px #cacaca;">Datylon</div>
<div class="a" style="left:743.10px;top:1070.00px;width:1.20px;height:22.50px;background:#484848;"></div>
<svg class="a" style="left:750px;top:1075px;" width="14" height="16" viewBox="0 0 14 16"><path d="M3.6 2 V13.6 L10.8 7.8 Z" fill="#d8d8d8"/></svg>
<div class="a" style="left:769.20px;top:1070.00px;width:1.20px;height:22.50px;background:#484848;"></div>
<div class="a" style="left:770.40px;top:1070.00px;width:974.00px;height:22.50px;background:#4b4b4b;"></div>
<svg class="a" style="left:774px;top:1074px;" width="14" height="16" viewBox="0 0 14 16"><path d="M9.5 2.5 L4.3 7.8 L9.5 13" stroke="#9a9a9a" stroke-width="1.3" fill="none"/></svg>
<div class="a" style="left:1256.00px;top:1075.00px;width:34.70px;height:19.00px;background:#5a5a5a;border-radius:9px;"></div>
<svg class="a" style="left:1700px;top:1074px;" width="14" height="16" viewBox="0 0 14 16"><path d="M5 2.5 L10.2 7.8 L5 13" stroke="#9a9a9a" stroke-width="1.3" fill="none"/></svg>
<div class="a" style="left:1720.00px;top:1074.00px;width:22.70px;height:18.50px;background:#505050;"></div>
<div class="a" style="left:860.00px;top:139.00px;width:12.00px;height:935.00px;background:linear-gradient(90deg,rgba(0,0,0,0.07),rgba(0,0,0,0.14));"></div>
<div class="a" style="left:866.00px;top:1073.50px;width:880.00px;height:6.00px;background:linear-gradient(180deg,rgba(0,0,0,0.28),rgba(0,0,0,0));"></div>
<div class="a" style="left:871.50px;top:110.70px;width:874.00px;height:963.30px;background:#3a3a3a;"></div>
<div class="a" style="left:871.50px;top:110.70px;width:874.00px;height:6.00px;background:#363636;"></div>
<div class="a" style="left:873.00px;top:116.70px;width:871.00px;height:36.60px;background:#424242;"></div>
<div class="a" style="left:873.00px;top:116.70px;width:128.30px;height:38.60px;background:#535353;"></div>
<div class="a" style="left:1144.50px;top:116.70px;width:1.00px;height:36.60px;background:#383838;"></div>
<div class="a t" style="left:885.40px;top:126.33px;font-size:15.2px;color:#f2f2f2;font-weight:bold;">Datylon Editor</div>
<div class="a t" style="left:1013.80px;top:126.54px;font-size:14.95px;color:#b5b5b5;font-weight:bold;">Datylon Account</div>
<svg class="a" style="left:1720px;top:128px;" width="16" height="14" viewBox="0 0 16 14"><path d="M2.5 3 L6.5 7 L2.5 11 M8.5 3 L12.5 7 L8.5 11" stroke="#c4c4c4" stroke-width="1.2" fill="none"/></svg>
<div class="a" style="left:873.00px;top:155.80px;width:871.00px;height:907.00px;background:#ffffff;"></div>
<div class="a" style="left:873.00px;top:1065.50px;width:871.00px;height:8.40px;background:#535353;"></div>
<svg class="a" style="left:1294px;top:1065px;" width="30" height="8" viewBox="0 0 30 8"><rect x="1.00" y="1" width="1.4" height="5.6" fill="#2e2e2e"/><rect x="3.75" y="1" width="1.4" height="5.6" fill="#2e2e2e"/><rect x="6.50" y="1" width="1.4" height="5.6" fill="#2e2e2e"/><rect x="9.25" y="1" width="1.4" height="5.6" fill="#2e2e2e"/><rect x="12.00" y="1" width="1.4" height="5.6" fill="#2e2e2e"/><rect x="14.75" y="1" width="1.4" height="5.6" fill="#2e2e2e"/><rect x="17.50" y="1" width="1.4" height="5.6" fill="#2e2e2e"/><rect x="20.25" y="1" width="1.4" height="5.6" fill="#2e2e2e"/><rect x="23.00" y="1" width="1.4" height="5.6" fill="#2e2e2e"/><rect x="25.75" y="1" width="1.4" height="5.6" fill="#2e2e2e"/></svg>
<div class="a t" style="left:900.60px;top:179.01px;font-size:15.7px;color:#1b1b1b;font-weight:bold;">Element_1_data</div>
<div class="a" style="left:1105.70px;top:172.90px;width:123.20px;height:27.90px;background:#eeeeee;border-radius:6px;"></div>
<div class="a t" style="left:1067.30px;top:178.95px;width:200px;text-align:center;font-size:16.6px;color:#1f1f1f;">Manage data</div>
<div class="a" style="left:873.00px;top:217.80px;width:377.00px;height:1.60px;background:#cfcfcf;"></div>
<div class="a" style="left:873.00px;top:219.40px;width:377.00px;height:35.80px;background:#efefef;"></div>
<div class="a" style="left:944.30px;top:255.20px;width:305.70px;height:60.20px;background:#f0f5fd;"></div>
<div class="a" style="left:873.00px;top:255.20px;width:71.30px;height:807.50px;background:#efefef;"></div>
<div class="a" style="left:943.80px;top:219.40px;width:1.20px;height:843.30px;background:#e4e4e4;"></div>
<div class="a" style="left:1012.60px;top:219.40px;width:1.20px;height:843.30px;background:#e4e4e4;"></div>
<div class="a" style="left:1082.70px;top:219.40px;width:1.20px;height:843.30px;background:#e4e4e4;"></div>
<div class="a" style="left:1153.10px;top:219.40px;width:1.20px;height:843.30px;background:#e4e4e4;"></div>
<div class="a" style="left:1223.80px;top:219.40px;width:1.20px;height:843.30px;background:#e4e4e4;"></div>
<div class="a" style="left:873.00px;top:254.60px;width:377.00px;height:1.20px;background:#dedede;"></div>
<div class="a" style="left:873.00px;top:315.00px;width:377.00px;height:1.20px;background:#e4e4e4;"></div>
<div class="a" style="left:873.00px;top:347.15px;width:377.00px;height:1.20px;background:#e8e8e8;"></div>
<div class="a" style="left:873.00px;top:379.50px;width:377.00px;height:1.20px;background:#e8e8e8;"></div>
<div class="a" style="left:873.00px;top:411.85px;width:377.00px;height:1.20px;background:#e8e8e8;"></div>
<div class="a" style="left:873.00px;top:444.20px;width:377.00px;height:1.20px;background:#e8e8e8;"></div>
<div class="a" style="left:873.00px;top:476.55px;width:377.00px;height:1.20px;background:#e8e8e8;"></div>
<div class="a" style="left:873.00px;top:508.90px;width:377.00px;height:1.20px;background:#e8e8e8;"></div>
<div class="a" style="left:873.00px;top:541.25px;width:377.00px;height:1.20px;background:#e8e8e8;"></div>
<div class="a" style="left:873.00px;top:573.60px;width:377.00px;height:1.20px;background:#e8e8e8;"></div>
<div class="a" style="left:873.00px;top:605.95px;width:377.00px;height:1.20px;background:#e8e8e8;"></div>
<div class="a" style="left:873.00px;top:638.30px;width:377.00px;height:1.20px;background:#e8e8e8;"></div>
<div class="a" style="left:873.00px;top:670.65px;width:377.00px;height:1.20px;background:#e8e8e8;"></div>
<div class="a" style="left:873.00px;top:703.00px;width:377.00px;height:1.20px;background:#e8e8e8;"></div>
<div class="a" style="left:873.00px;top:735.35px;width:377.00px;height:1.20px;background:#e8e8e8;"></div>
<div class="a" style="left:873.00px;top:767.70px;width:377.00px;height:1.20px;background:#e8e8e8;"></div>
<div class="a" style="left:873.00px;top:800.05px;width:377.00px;height:1.20px;background:#e8e8e8;"></div>
<div class="a" style="left:873.00px;top:832.40px;width:377.00px;height:1.20px;background:#e8e8e8;"></div>
<div class="a" style="left:873.00px;top:864.75px;width:377.00px;height:1.20px;background:#e8e8e8;"></div>
<div class="a" style="left:873.00px;top:897.10px;width:377.00px;height:1.20px;background:#e8e8e8;"></div>
<div class="a" style="left:873.00px;top:929.45px;width:377.00px;height:1.20px;background:#e8e8e8;"></div>
<div class="a" style="left:873.00px;top:961.80px;width:377.00px;height:1.20px;background:#e8e8e8;"></div>
<div class="a" style="left:873.00px;top:994.15px;width:377.00px;height:1.20px;background:#e8e8e8;"></div>
<div class="a" style="left:873.00px;top:1026.50px;width:377.00px;height:1.20px;background:#e8e8e8;"></div>
<div class="a" style="left:873.00px;top:1058.85px;width:377.00px;height:1.20px;background:#e8e8e8;"></div>
<div class="a t" style="left:948.70px;top:229.46px;width:60px;text-align:center;font-size:16px;color:#1f1f1f;">A</div>
<div class="a t" style="left:1018.15px;top:229.46px;width:60px;text-align:center;font-size:16px;color:#1f1f1f;">B</div>
<div class="a t" style="left:1088.40px;top:229.46px;width:60px;text-align:center;font-size:16px;color:#1f1f1f;">C</div>
<div class="a t" style="left:1158.95px;top:229.46px;width:60px;text-align:center;font-size:16px;color:#1f1f1f;">D</div>
<div class="a t" style="left:878.65px;top:262.96px;width:60px;text-align:center;font-size:16px;color:#1f1f1f;">1</div>
<div class="a t" style="left:950.80px;top:262.96px;width:61.00px;overflow:hidden;font-size:16px;color:#1f1f1f;">Category</div>
<div class="a t" style="left:950.80px;top:292.26px;width:61.00px;overflow:hidden;font-size:16px;color:#1f1f1f;">1</div>
<div class="a t" style="left:1019.60px;top:262.96px;width:62.30px;overflow:hidden;font-size:16px;color:#1f1f1f;">Category</div>
<div class="a t" style="left:1019.60px;top:292.26px;width:62.30px;overflow:hidden;font-size:16px;color:#1f1f1f;">2</div>
<div class="a t" style="left:1089.70px;top:262.96px;width:62.60px;overflow:hidden;font-size:16px;color:#1f1f1f;">Value</div>
<div class="a t" style="left:878.65px;top:322.56px;width:60px;text-align:center;font-size:16px;color:#1f1f1f;">2</div>
<div class="a t" style="left:950.80px;top:322.56px;width:61.00px;overflow:hidden;font-size:16px;color:#1f1f1f;">A</div>
<div class="a t" style="left:1019.60px;top:322.56px;width:62.30px;overflow:hidden;font-size:16px;color:#1f1f1f;">A</div>
<div class="a t" style="left:1089.70px;top:322.56px;width:62.60px;overflow:hidden;font-size:16px;color:#1f1f1f;">4.186</div>
<div class="a t" style="left:878.65px;top:354.91px;width:60px;text-align:center;font-size:16px;color:#1f1f1f;">3</div>
<div class="a t" style="left:950.80px;top:354.91px;width:61.00px;overflow:hidden;font-size:16px;color:#1f1f1f;">B</div>
<div class="a t" style="left:1019.60px;top:354.91px;width:62.30px;overflow:hidden;font-size:16px;color:#1f1f1f;">A</div>
<div class="a t" style="left:1089.70px;top:354.91px;width:62.60px;overflow:hidden;font-size:16px;color:#1f1f1f;">3.949</div>
<div class="a t" style="left:878.65px;top:387.26px;width:60px;text-align:center;font-size:16px;color:#1f1f1f;">4</div>
<div class="a t" style="left:950.80px;top:387.26px;width:61.00px;overflow:hidden;font-size:16px;color:#1f1f1f;">C</div>
<div class="a t" style="left:1019.60px;top:387.26px;width:62.30px;overflow:hidden;font-size:16px;color:#1f1f1f;">A</div>
<div class="a t" style="left:1089.70px;top:387.26px;width:62.60px;overflow:hidden;font-size:16px;color:#1f1f1f;">4.082</div>
<div class="a t" style="left:878.65px;top:419.61px;width:60px;text-align:center;font-size:16px;color:#1f1f1f;">5</div>
<div class="a t" style="left:950.80px;top:419.61px;width:61.00px;overflow:hidden;font-size:16px;color:#1f1f1f;">D</div>
<div class="a t" style="left:1019.60px;top:419.61px;width:62.30px;overflow:hidden;font-size:16px;color:#1f1f1f;">A</div>
<div class="a t" style="left:1089.70px;top:419.61px;width:62.60px;overflow:hidden;font-size:16px;color:#1f1f1f;">4.016</div>
<div class="a t" style="left:878.65px;top:451.96px;width:60px;text-align:center;font-size:16px;color:#1f1f1f;">6</div>
<div class="a t" style="left:950.80px;top:451.96px;width:61.00px;overflow:hidden;font-size:16px;color:#1f1f1f;">E</div>
<div class="a t" style="left:1019.60px;top:451.96px;width:62.30px;overflow:hidden;font-size:16px;color:#1f1f1f;">A</div>
<div class="a t" style="left:1089.70px;top:451.96px;width:62.60px;overflow:hidden;font-size:16px;color:#1f1f1f;">4.168</div>
<div class="a t" style="left:878.65px;top:484.31px;width:60px;text-align:center;font-size:16px;color:#1f1f1f;">7</div>
<div class="a t" style="left:950.80px;top:484.31px;width:61.00px;overflow:hidden;font-size:16px;color:#1f1f1f;">F</div>
<div class="a t" style="left:1019.60px;top:484.31px;width:62.30px;overflow:hidden;font-size:16px;color:#1f1f1f;">A</div>
<div class="a t" style="left:1089.70px;top:484.31px;width:62.60px;overflow:hidden;font-size:16px;color:#1f1f1f;">4.031</div>
<div class="a t" style="left:878.65px;top:516.66px;width:60px;text-align:center;font-size:16px;color:#1f1f1f;">8</div>
<div class="a t" style="left:950.80px;top:516.66px;width:61.00px;overflow:hidden;font-size:16px;color:#1f1f1f;">G</div>
<div class="a t" style="left:1019.60px;top:516.66px;width:62.30px;overflow:hidden;font-size:16px;color:#1f1f1f;">A</div>
<div class="a t" style="left:1089.70px;top:516.66px;width:62.60px;overflow:hidden;font-size:16px;color:#1f1f1f;">4.135</div>
<div class="a t" style="left:878.65px;top:549.01px;width:60px;text-align:center;font-size:16px;color:#1f1f1f;">9</div>
<div class="a t" style="left:950.80px;top:549.01px;width:61.00px;overflow:hidden;font-size:16px;color:#1f1f1f;">H</div>
<div class="a t" style="left:1019.60px;top:549.01px;width:62.30px;overflow:hidden;font-size:16px;color:#1f1f1f;">A</div>
<div class="a t" style="left:1089.70px;top:549.01px;width:62.60px;overflow:hidden;font-size:16px;color:#1f1f1f;">4.217</div>
<div class="a t" style="left:878.65px;top:581.36px;width:60px;text-align:center;font-size:16px;color:#1f1f1f;">10</div>
<div class="a t" style="left:950.80px;top:581.36px;width:61.00px;overflow:hidden;font-size:16px;color:#1f1f1f;">I</div>
<div class="a t" style="left:1019.60px;top:581.36px;width:62.30px;overflow:hidden;font-size:16px;color:#1f1f1f;">A</div>
<div class="a t" style="left:1089.70px;top:581.36px;width:62.60px;overflow:hidden;font-size:16px;color:#1f1f1f;">4.237</div>
<div class="a t" style="left:878.65px;top:613.71px;width:60px;text-align:center;font-size:16px;color:#1f1f1f;">11</div>
<div class="a t" style="left:950.80px;top:613.71px;width:61.00px;overflow:hidden;font-size:16px;color:#1f1f1f;">J</div>
<div class="a t" style="left:1019.60px;top:613.71px;width:62.30px;overflow:hidden;font-size:16px;color:#1f1f1f;">A</div>
<div class="a t" style="left:1089.70px;top:613.71px;width:62.60px;overflow:hidden;font-size:16px;color:#1f1f1f;">4.403</div>
<div class="a t" style="left:878.65px;top:646.06px;width:60px;text-align:center;font-size:16px;color:#1f1f1f;">12</div>
<div class="a t" style="left:950.80px;top:646.06px;width:61.00px;overflow:hidden;font-size:16px;color:#1f1f1f;">K</div>
<div class="a t" style="left:1019.60px;top:646.06px;width:62.30px;overflow:hidden;font-size:16px;color:#1f1f1f;">A</div>
<div class="a t" style="left:1089.70px;top:646.06px;width:62.60px;overflow:hidden;font-size:16px;color:#1f1f1f;">4.670</div>
<div class="a t" style="left:878.65px;top:678.41px;width:60px;text-align:center;font-size:16px;color:#1f1f1f;">13</div>
<div class="a t" style="left:950.80px;top:678.41px;width:61.00px;overflow:hidden;font-size:16px;color:#1f1f1f;">L</div>
<div class="a t" style="left:1019.60px;top:678.41px;width:62.30px;overflow:hidden;font-size:16px;color:#1f1f1f;">A</div>
<div class="a t" style="left:1089.70px;top:678.41px;width:62.60px;overflow:hidden;font-size:16px;color:#1f1f1f;">4.587</div>
<div class="a t" style="left:878.65px;top:710.76px;width:60px;text-align:center;font-size:16px;color:#1f1f1f;">14</div>
<div class="a t" style="left:950.80px;top:710.76px;width:61.00px;overflow:hidden;font-size:16px;color:#1f1f1f;">M</div>
<div class="a t" style="left:1019.60px;top:710.76px;width:62.30px;overflow:hidden;font-size:16px;color:#1f1f1f;">A</div>
<div class="a t" style="left:1089.70px;top:710.76px;width:62.60px;overflow:hidden;font-size:16px;color:#1f1f1f;">4.488</div>
<div class="a t" style="left:878.65px;top:743.11px;width:60px;text-align:center;font-size:16px;color:#1f1f1f;">15</div>
<div class="a t" style="left:950.80px;top:743.11px;width:61.00px;overflow:hidden;font-size:16px;color:#1f1f1f;">N</div>
<div class="a t" style="left:1019.60px;top:743.11px;width:62.30px;overflow:hidden;font-size:16px;color:#1f1f1f;">A</div>
<div class="a t" style="left:1089.70px;top:743.11px;width:62.60px;overflow:hidden;font-size:16px;color:#1f1f1f;">4.484</div>
<div class="a t" style="left:878.65px;top:775.46px;width:60px;text-align:center;font-size:16px;color:#1f1f1f;">16</div>
<div class="a t" style="left:950.80px;top:775.46px;width:61.00px;overflow:hidden;font-size:16px;color:#1f1f1f;">O</div>
<div class="a t" style="left:1019.60px;top:775.46px;width:62.30px;overflow:hidden;font-size:16px;color:#1f1f1f;">A</div>
<div class="a t" style="left:1089.70px;top:775.46px;width:62.60px;overflow:hidden;font-size:16px;color:#1f1f1f;">4.683</div>
<div class="a t" style="left:878.65px;top:807.81px;width:60px;text-align:center;font-size:16px;color:#1f1f1f;">17</div>
<div class="a t" style="left:950.80px;top:807.81px;width:61.00px;overflow:hidden;font-size:16px;color:#1f1f1f;">P</div>
<div class="a t" style="left:1019.60px;top:807.81px;width:62.30px;overflow:hidden;font-size:16px;color:#1f1f1f;">A</div>
<div class="a t" style="left:1089.70px;top:807.81px;width:62.60px;overflow:hidden;font-size:16px;color:#1f1f1f;">4.730</div>
<div class="a t" style="left:878.65px;top:840.16px;width:60px;text-align:center;font-size:16px;color:#1f1f1f;">18</div>
<div class="a t" style="left:950.80px;top:840.16px;width:61.00px;overflow:hidden;font-size:16px;color:#1f1f1f;">A</div>
<div class="a t" style="left:1019.60px;top:840.16px;width:62.30px;overflow:hidden;font-size:16px;color:#1f1f1f;">B</div>
<div class="a t" style="left:1089.70px;top:840.16px;width:62.60px;overflow:hidden;font-size:16px;color:#1f1f1f;">3.949</div>
<div class="a t" style="left:878.65px;top:872.51px;width:60px;text-align:center;font-size:16px;color:#1f1f1f;">19</div>
<div class="a t" style="left:950.80px;top:872.51px;width:61.00px;overflow:hidden;font-size:16px;color:#1f1f1f;">B</div>
<div class="a t" style="left:1019.60px;top:872.51px;width:62.30px;overflow:hidden;font-size:16px;color:#1f1f1f;">B</div>
<div class="a t" style="left:1089.70px;top:872.51px;width:62.60px;overflow:hidden;font-size:16px;color:#1f1f1f;">4.082</div>
<div class="a t" style="left:878.65px;top:904.86px;width:60px;text-align:center;font-size:16px;color:#1f1f1f;">20</div>
<div class="a t" style="left:950.80px;top:904.86px;width:61.00px;overflow:hidden;font-size:16px;color:#1f1f1f;">C</div>
<div class="a t" style="left:1019.60px;top:904.86px;width:62.30px;overflow:hidden;font-size:16px;color:#1f1f1f;">B</div>
<div class="a t" style="left:1089.70px;top:904.86px;width:62.60px;overflow:hidden;font-size:16px;color:#1f1f1f;">4.016</div>
<div class="a t" style="left:878.65px;top:937.21px;width:60px;text-align:center;font-size:16px;color:#1f1f1f;">21</div>
<div class="a t" style="left:950.80px;top:937.21px;width:61.00px;overflow:hidden;font-size:16px;color:#1f1f1f;">D</div>
<div class="a t" style="left:1019.60px;top:937.21px;width:62.30px;overflow:hidden;font-size:16px;color:#1f1f1f;">B</div>
<div class="a t" style="left:1089.70px;top:937.21px;width:62.60px;overflow:hidden;font-size:16px;color:#1f1f1f;">4.168</div>
<div class="a t" style="left:878.65px;top:969.56px;width:60px;text-align:center;font-size:16px;color:#1f1f1f;">22</div>
<div class="a t" style="left:950.80px;top:969.56px;width:61.00px;overflow:hidden;font-size:16px;color:#1f1f1f;">E</div>
<div class="a t" style="left:1019.60px;top:969.56px;width:62.30px;overflow:hidden;font-size:16px;color:#1f1f1f;">B</div>
<div class="a t" style="left:1089.70px;top:969.56px;width:62.60px;overflow:hidden;font-size:16px;color:#1f1f1f;">4.031</div>
<div class="a t" style="left:878.65px;top:1001.91px;width:60px;text-align:center;font-size:16px;color:#1f1f1f;">23</div>
<div class="a t" style="left:950.80px;top:1001.91px;width:61.00px;overflow:hidden;font-size:16px;color:#1f1f1f;">F</div>
<div class="a t" style="left:1019.60px;top:1001.91px;width:62.30px;overflow:hidden;font-size:16px;color:#1f1f1f;">B</div>
<div class="a t" style="left:1089.70px;top:1001.91px;width:62.60px;overflow:hidden;font-size:16px;color:#1f1f1f;">4.135</div>
<div class="a t" style="left:878.65px;top:1034.26px;width:60px;text-align:center;font-size:16px;color:#1f1f1f;">24</div>
<div class="a t" style="left:950.80px;top:1034.26px;width:61.00px;overflow:hidden;font-size:16px;color:#1f1f1f;">G</div>
<div class="a t" style="left:1019.60px;top:1034.26px;width:62.30px;overflow:hidden;font-size:16px;color:#1f1f1f;">B</div>
<div class="a t" style="left:1089.70px;top:1034.26px;width:62.60px;overflow:hidden;font-size:16px;color:#1f1f1f;">4.217</div>
<div class="a" style="left:1250.00px;top:155.80px;width:16.80px;height:907.00px;background:linear-gradient(90deg,#ededed,#f6f6f6 12%,#f6f6f6 88%,#efefef);"></div>
<svg class="a" style="left:1252px;top:580px;" width="14" height="58" viewBox="0 0 14 58"><path d="M9.6 4 L4.5 9 L9.6 14" stroke="#222" stroke-width="1.5" fill="none"/><path d="M4.5 43.5 L9.6 48.5 L4.5 53.5" stroke="#222" stroke-width="1.5" fill="none"/></svg>
<svg class="a" style="left:1286px;top:179px;" width="26" height="16" viewBox="0 0 26 16">
<path d="M2 3.5 H24 M2 8.2 H24 M2 12.9 H24" stroke="#1a5cff" stroke-width="0.9"/>
<circle cx="9.3" cy="3.5" r="1.7" fill="#1a5cff"/><circle cx="16.4" cy="3.5" r="1.7" fill="#1a5cff"/>
<circle cx="14" cy="8.2" r="1.7" fill="#1a5cff"/><circle cx="18.7" cy="8.2" r="1.7" fill="#1a5cff"/>
<circle cx="8.2" cy="12.9" r="1.7" fill="#1a5cff"/><circle cx="19.8" cy="12.9" r="1.7" fill="#1a5cff"/>
</svg>
<div class="a t" style="left:1319.90px;top:179.63px;font-size:15.8px;color:#1b1b1b;font-weight:bold;">Element_1</div>
<div class="a" style="left:1537.30px;top:173.00px;width:113.30px;height:27.80px;background:#eeeeee;border-radius:6px;"></div>
<div class="a t" style="left:1494.00px;top:178.55px;width:200px;text-align:center;font-size:16.6px;color:#1f1f1f;">Select chart</div>
<div class="a" style="left:1662.40px;top:173.00px;width:60.10px;height:27.80px;background:#eeeeee;border-radius:6px;"></div>
<div class="a t" style="left:1642.50px;top:178.72px;width:100px;text-align:center;font-size:16.4px;color:#1f1f1f;">Help</div>
<div class="a" style="left:1266.80px;top:217.60px;width:477.20px;height:1.50px;background:#d2d2d2;"></div>
<div class="a" style="left:1266.80px;top:219.10px;width:159.10px;height:49.80px;background:#f0f5fd;"></div>
<div class="a" style="left:1266.80px;top:268.50px;width:477.20px;height:1.10px;background:#dedede;"></div>
<div class="a" style="left:1266.80px;top:266.90px;width:159.10px;height:2.20px;background:#1a5cff;"></div>
<div class="a t" style="left:1246.30px;top:237.26px;width:200px;text-align:center;font-size:15.4px;color:#1a5cff;font-weight:bold;">Binding</div>
<div class="a t" style="left:1405.50px;top:236.42px;width:200px;text-align:center;font-size:16.4px;color:#1f1f1f;">Formatting</div>
<div class="a t" style="left:1564.30px;top:236.59px;width:200px;text-align:center;font-size:16.2px;color:#1f1f1f;">Styling</div>
<div class="a" style="left:1266.80px;top:269.60px;width:477.20px;height:41.30px;background:#f6f6f6;"></div>
<div class="a" style="left:1266.80px;top:310.90px;width:477.20px;height:1.10px;background:#dedede;"></div>
<div class="a t" style="left:1283.30px;top:284.90px;font-size:12.4px;color:#333333;font-weight:bold;">DATASET</div>
<div class="a t" style="left:1283.80px;top:335.29px;font-size:16.2px;color:#1f1f1f;">First row are headings</div>
<div class="a" style="left:1703.00px;top:336.10px;width:17.00px;height:16.80px;background:#0a57ff;border-radius:4px;"></div>
<svg class="a" style="left:1703px;top:336px;" width="17" height="17" viewBox="0 0 17 17"><path d="M4 8.6 L7.2 11.8 L13.2 5.4" stroke="#fff" stroke-width="2" fill="none"/></svg>
<div class="a t" style="left:1283.80px;top:380.19px;font-size:16.2px;color:#1f1f1f;">Data is in</div>
<div class="a" style="left:1506.10px;top:374.30px;width:93.60px;height:27.40px;background:#eeeeee;border-radius:5px;box-shadow:inset 0 0 0 1px #8d8d8d;"></div>
<div class="a t" style="left:1502.90px;top:379.82px;width:100px;text-align:center;font-size:16.4px;color:#1f1f1f;">Rows</div>
<div class="a" style="left:1606.10px;top:374.30px;width:120.70px;height:27.40px;background:#eeeeee;border-radius:5px;"></div>
<div class="a t" style="left:1591.50px;top:379.65px;width:150px;text-align:center;font-size:16.6px;color:#1f1f1f;">Columns</div>
<div class="a" style="left:1266.80px;top:419.00px;width:477.20px;height:1.10px;background:#dedede;"></div>
<div class="a" style="left:1266.80px;top:420.10px;width:477.20px;height:40.00px;background:#f6f6f6;"></div>
<div class="a" style="left:1266.80px;top:459.90px;width:477.20px;height:1.10px;background:#dedede;"></div>
<div class="a t" style="left:1283.80px;top:433.90px;font-size:12.4px;color:#333333;font-weight:bold;">SERIES</div>
<div class="a" style="left:1266.80px;top:461.00px;width:477.20px;height:46.60px;background:#f6f8fb;"></div>
<div class="a t" style="left:1283.80px;top:475.96px;font-size:16px;color:#1f1f1f;">New series 1</div>
<svg class="a" style="left:1708px;top:479px;" width="16" height="12" viewBox="0 0 16 12"><path d="M2 10.7 L7.7 1.9 L13.4 10.7 Z" fill="#1f1f1f"/></svg>
<div class="a t" style="left:1283.80px;top:524.59px;font-size:16.2px;color:#1f1f1f;">Name</div>
<div class="a" style="left:1439.10px;top:519.80px;width:287.30px;height:26.60px;background:#ffffff;border-radius:5px;box-shadow:inset 0 0 0 1.2px #c4c4c4;"></div>
<div class="a t" style="left:1444.90px;top:525.72px;font-size:16.4px;color:#1f1f1f;">New series 1</div>
<div class="a t" style="left:1283.80px;top:563.89px;font-size:16.2px;color:#1f1f1f;">Category</div>
<div class="a" style="left:1439.10px;top:559.20px;width:287.30px;height:26.60px;background:#ffffff;border-radius:5px;box-shadow:inset 0 0 0 1.2px #c4c4c4;overflow:hidden;"></div>
<div class="a" style="left:1697.60px;top:560.40px;width:27.60px;height:24.20px;background:#efefef;border-radius:0 4px 4px 0;"></div>
<svg class="a" style="left:1706px;top:567.2px;" width="12" height="10" viewBox="0 0 12 10"><path d="M1.8 2 L10.2 2 L6 8.4 Z" fill="#1f1f1f"/></svg>
<div class="a t" style="left:1444.90px;top:565.02px;font-size:16.4px;color:#1f1f1f;">Category 1</div>
<div class="a t" style="left:1283.80px;top:603.49px;font-size:16.2px;color:#1f1f1f;">Value</div>
<div class="a" style="left:1439.10px;top:598.40px;width:287.30px;height:26.60px;background:#ffffff;border-radius:5px;box-shadow:inset 0 0 0 1.2px #c4c4c4;overflow:hidden;"></div>
<div class="a" style="left:1697.60px;top:599.60px;width:27.60px;height:24.20px;background:#efefef;border-radius:0 4px 4px 0;"></div>
<svg class="a" style="left:1706px;top:606.4px;" width="12" height="10" viewBox="0 0 12 10"><path d="M1.8 2 L10.2 2 L6 8.4 Z" fill="#1f1f1f"/></svg>
<div class="a t" style="left:1444.90px;top:604.62px;font-size:16.4px;color:#1f1f1f;">Value</div>
<div class="a t" style="left:1283.80px;top:642.79px;font-size:16.2px;color:#1f1f1f;">Color</div>
<div class="a" style="left:1439.10px;top:637.90px;width:287.30px;height:26.60px;background:#ffffff;border-radius:5px;box-shadow:inset 0 0 0 1.2px #c4c4c4;overflow:hidden;"></div>
<div class="a" style="left:1697.60px;top:639.10px;width:27.60px;height:24.20px;background:#efefef;border-radius:0 4px 4px 0;"></div>
<svg class="a" style="left:1706px;top:645.9px;" width="12" height="10" viewBox="0 0 12 10"><path d="M1.8 2 L10.2 2 L6 8.4 Z" fill="#1f1f1f"/></svg>
<div class="a t" style="left:1444.90px;top:643.92px;font-size:16.4px;color:#1f1f1f;">Category 2</div>
<div class="a" style="left:1266.80px;top:676.50px;width:477.20px;height:1.10px;background:#e8e8e8;"></div>
<div class="a" style="left:1722.70px;top:1041.70px;width:21.30px;height:21.00px;background:#535353;"></div>
<div class="a" style="left:1744.00px;top:97.50px;width:2.50px;height:997.00px;background:#3a3a3a;"></div>
<div class="a" style="left:1746.50px;top:97.50px;width:52.10px;height:997.00px;background:#535353;"></div>
<div class="a" style="left:1746.50px;top:97.50px;width:52.10px;height:16.70px;background:#434343;"></div>
<svg class="a" style="left:1779px;top:101px;" width="14" height="10" viewBox="0 0 14 10"><path d="M5.5 2.5 L2.5 5.5 L5.5 8.5 M11 2.5 L8 5.5 L11 8.5" stroke="#c0c0c0" stroke-width="1.2" fill="none"/></svg>
<div class="a" style="left:1746.50px;top:113.50px;width:52.10px;height:1.20px;background:#3b3b3b;"></div>
<svg class="a" style="left:1758px;top:119.2px;" width="30" height="7" viewBox="0 0 30 7"><rect x="1.00" y="0.5" width="1.4" height="5.4" fill="#2e2e2e"/><rect x="3.75" y="0.5" width="1.4" height="5.4" fill="#2e2e2e"/><rect x="6.50" y="0.5" width="1.4" height="5.4" fill="#2e2e2e"/><rect x="9.25" y="0.5" width="1.4" height="5.4" fill="#2e2e2e"/><rect x="12.00" y="0.5" width="1.4" height="5.4" fill="#2e2e2e"/><rect x="14.75" y="0.5" width="1.4" height="5.4" fill="#2e2e2e"/><rect x="17.50" y="0.5" width="1.4" height="5.4" fill="#2e2e2e"/><rect x="20.25" y="0.5" width="1.4" height="5.4" fill="#2e2e2e"/><rect x="23.00" y="0.5" width="1.4" height="5.4" fill="#2e2e2e"/><rect x="25.75" y="0.5" width="1.4" height="5.4" fill="#2e2e2e"/></svg>
<div class="a" style="left:1753.00px;top:131.70px;width:39.00px;height:32.40px;background:#3a3a3a;border-radius:5px;box-shadow:inset 0 0 0 1px #5c5c5c;"></div>
<svg class="a" style="left:1761px;top:134px;" width="26" height="26" viewBox="0 0 26 26">
<rect x="1" y="0" width="9.8" height="1.3" fill="#1c1c1c"/>
<rect x="10.8" y="2.9" width="14.1" height="1.1" fill="#1c1c1c"/>
<path d="M1.65 24.35 V1.95 H10.15 V4.65 H24.25 V24.35 Z" fill="none" stroke="#bdbdbd" stroke-width="1.3"/>
<path d="M5.2 21 V14 L6.2 13 H8.2 V10.6 L8.9 9.9 H11.1 L11.8 10.6 V13 H14.3 V10.6 L15 9.9 H17.3 L18 10.6 V13 H20 L20.9 14 V21 Z" fill="#ababab"/>
</svg>
<svg class="a" style="left:1761px;top:173px;" width="26" height="26" viewBox="0 0 26 26">
<rect x="1" y="0" width="9.8" height="1.3" fill="#1c1c1c"/>
<rect x="10.8" y="2.9" width="14.1" height="1.1" fill="#1c1c1c"/>
<path d="M1.65 24.35 V1.95 H10.15 V4.65 H24.25 V24.35 Z" fill="none" stroke="#bdbdbd" stroke-width="1.3"/>
<path d="M5.2 21 V14 L6.2 13 H8.2 V10.6 L8.9 9.9 H11.1 L11.8 10.6 V13 H14.3 V10.6 L15 9.9 H17.3 L18 10.6 V13 H20 L20.9 14 V21 Z" fill="#ababab"/>
</svg>
<div class="a" style="left:1746.50px;top:210.50px;width:52.10px;height:1.70px;background:#3b3b3b;"></div>
<svg class="a" style="left:1758px;top:216px;" width="30" height="7" viewBox="0 0 30 7"><rect x="1.00" y="0.5" width="1.4" height="5.4" fill="#2e2e2e"/><rect x="3.75" y="0.5" width="1.4" height="5.4" fill="#2e2e2e"/><rect x="6.50" y="0.5" width="1.4" height="5.4" fill="#2e2e2e"/><rect x="9.25" y="0.5" width="1.4" height="5.4" fill="#2e2e2e"/><rect x="12.00" y="0.5" width="1.4" height="5.4" fill="#2e2e2e"/><rect x="14.75" y="0.5" width="1.4" height="5.4" fill="#2e2e2e"/><rect x="17.50" y="0.5" width="1.4" height="5.4" fill="#2e2e2e"/><rect x="20.25" y="0.5" width="1.4" height="5.4" fill="#2e2e2e"/><rect x="23.00" y="0.5" width="1.4" height="5.4" fill="#2e2e2e"/><rect x="25.75" y="0.5" width="1.4" height="5.4" fill="#2e2e2e"/></svg>
<svg class="a" style="left:1760px;top:231px;" width="28" height="28" viewBox="0 0 28 28">
<path d="M14 2.4 L25.5 10.5 L14 18.3 L2.5 10.5 Z" fill="#c8c8c8"/>
<path d="M2.5 17.7 L5.6 15.6 L14 21.5 L22.4 15.6 L25.5 17.7 L14 26.2 Z" fill="#c8c8c8"/>
</svg>
<svg class="a" style="left:1760px;top:270px;" width="28" height="28" viewBox="0 0 28 28">
<path d="M3 23.2 L10.6 4.7 L13.8 4.7 L21.3 23.2 L18.2 23.2 L16.4 18.6 L8 18.6 L6.2 23.2 Z M9.1 15.8 L15.3 15.8 L12.2 7.8 Z" fill="#c8c8c8" fill-rule="evenodd"/>
<rect x="22.9" y="1.3" width="1.6" height="25.4" fill="#c8c8c8"/>
</svg>
<svg class="a" style="left:1762px;top:313px;" width="20" height="24" viewBox="0 0 20 24">
<path d="M9.5 1.8 H17.5 V3.2 H16.5 V22 H15 V3.2 H12.2 V22 H10.7 V11.5 H9.5 C5.8 11.5 2.8 9.8 2.8 6.6 C2.8 3.5 5.8 1.8 9.5 1.8 Z" fill="#c8c8c8"/>
</svg>
<div class="a" style="left:1761.90px;top:353.70px;width:24.10px;height:2.00px;background:#c8c8c8;"></div>
<div class="a" style="left:1761.90px;top:360.20px;width:24.10px;height:3.30px;background:#c8c8c8;"></div>
<div class="a" style="left:1761.90px;top:366.60px;width:24.10px;height:4.40px;background:#c8c8c8;"></div>
<svg class="a" style="left:1758px;top:390px;" width="32" height="24" viewBox="0 0 32 24">
<path d="M16 2.5 C24 2.3 29.5 6 29.5 11.5 C29.5 17.5 23 21.5 15 21.5 C7.5 21.5 2.2 19 2.2 15 C2.2 12.7 4.5 11.8 7.3 11.8 C10 11.8 11.3 10.5 10.3 8.3 C9 5 11 2.6 16 2.5 Z" fill="#c8c8c8"/>
<circle cx="7.3" cy="15.8" r="2.6" fill="#535353"/><circle cx="13" cy="17.4" r="2.3" fill="#535353"/>
<circle cx="18.7" cy="16.3" r="2.1" fill="#535353"/><circle cx="23.3" cy="13.3" r="1.8" fill="#535353"/><circle cx="24.3" cy="8.6" r="1.5" fill="#535353"/>
</svg>
<svg class="a" style="left:1762px;top:430px;" width="26" height="26" viewBox="0 0 26 26"><path d="M2 22.4 L2.00 1.80 A20.6 20.6 0 0 1 6.58 2.32 Z" fill="#1c1c1c"/><path d="M2 22.4 L6.58 2.32 A20.6 20.6 0 0 1 10.94 3.84 Z" fill="#3c3c3c"/><path d="M2 22.4 L10.94 3.84 A20.6 20.6 0 0 1 14.84 6.29 Z" fill="#5c5c5c"/><path d="M2 22.4 L14.84 6.29 A20.6 20.6 0 0 1 18.11 9.56 Z" fill="#7d7d7d"/><path d="M2 22.4 L18.11 9.56 A20.6 20.6 0 0 1 20.56 13.46 Z" fill="#9d9d9d"/><path d="M2 22.4 L20.56 13.46 A20.6 20.6 0 0 1 22.08 17.82 Z" fill="#bdbdbd"/><path d="M2 22.4 L22.08 17.82 A20.6 20.6 0 0 1 22.60 22.40 Z" fill="#dedede"/><path d="M1.5 22.4 V1.5 A20.9 20.9 0 0 1 22.4 22.4 Z" fill="none" stroke="#cfcfcf" stroke-width="1.2"/></svg>
<svg class="a" style="left:1758px;top:467px;" width="30" height="30" viewBox="0 0 30 30">
<circle cx="11" cy="11.5" r="9" fill="#c8c8c8"/>
<circle cx="18.2" cy="17.7" r="8.6" fill="#6e6e6e" stroke="#c8c8c8" stroke-width="1.5"/>
</svg>
<svg class="a" style="left:1760px;top:511px;" width="28" height="20" viewBox="0 0 28 20">
<rect x="1.7" y="2" width="23" height="15.6" fill="#c8c8c8"/>
<rect x="3.6" y="3.8" width="4.7" height="4.8" fill="#777"/><rect x="18.2" y="3.8" width="4.7" height="4.8" fill="#777"/>
<rect x="3.6" y="10.8" width="4.7" height="4.8" fill="#777"/><rect x="10.9" y="10.8" width="4.7" height="4.8" fill="#777"/><rect x="18.2" y="10.8" width="4.7" height="4.8" fill="#777"/>
</svg>
<div class="a" style="left:1746.50px;top:543.00px;width:52.10px;height:1.70px;background:#3b3b3b;"></div>
<svg class="a" style="left:1758px;top:549.5px;" width="30" height="7" viewBox="0 0 30 7"><rect x="1.00" y="0.5" width="1.4" height="5.4" fill="#2e2e2e"/><rect x="3.75" y="0.5" width="1.4" height="5.4" fill="#2e2e2e"/><rect x="6.50" y="0.5" width="1.4" height="5.4" fill="#2e2e2e"/><rect x="9.25" y="0.5" width="1.4" height="5.4" fill="#2e2e2e"/><rect x="12.00" y="0.5" width="1.4" height="5.4" fill="#2e2e2e"/><rect x="14.75" y="0.5" width="1.4" height="5.4" fill="#2e2e2e"/><rect x="17.50" y="0.5" width="1.4" height="5.4" fill="#2e2e2e"/><rect x="20.25" y="0.5" width="1.4" height="5.4" fill="#2e2e2e"/><rect x="23.00" y="0.5" width="1.4" height="5.4" fill="#2e2e2e"/><rect x="25.75" y="0.5" width="1.4" height="5.4" fill="#2e2e2e"/></svg>
<svg class="a" style="left:1762px;top:566px;" width="26" height="26" viewBox="0 0 26 26"><rect x="3.5" y="3.5" width="18.4" height="17.5" fill="none" stroke="#c8c8c8" stroke-width="1.4"/><rect x="1.10" y="1.10" width="4.8" height="4.8" fill="#c8c8c8"/><rect x="10.30" y="1.10" width="4.8" height="4.8" fill="#c8c8c8"/><rect x="19.50" y="1.10" width="4.8" height="4.8" fill="#c8c8c8"/><rect x="1.10" y="9.80" width="4.8" height="4.8" fill="#c8c8c8"/><rect x="19.50" y="9.80" width="4.8" height="4.8" fill="#c8c8c8"/><rect x="1.10" y="18.60" width="4.8" height="4.8" fill="#c8c8c8"/><rect x="10.30" y="18.60" width="4.8" height="4.8" fill="#c8c8c8"/><rect x="19.50" y="18.60" width="4.8" height="4.8" fill="#c8c8c8"/><circle cx="12.7" cy="12.2" r="1.3" fill="#c8c8c8"/></svg>
<div class="a" style="left:1746.50px;top:601.30px;width:52.10px;height:1.70px;background:#3b3b3b;"></div>
<svg class="a" style="left:1758px;top:607px;" width="30" height="7" viewBox="0 0 30 7"><rect x="1.00" y="0.5" width="1.4" height="5.4" fill="#2e2e2e"/><rect x="3.75" y="0.5" width="1.4" height="5.4" fill="#2e2e2e"/><rect x="6.50" y="0.5" width="1.4" height="5.4" fill="#2e2e2e"/><rect x="9.25" y="0.5" width="1.4" height="5.4" fill="#2e2e2e"/><rect x="12.00" y="0.5" width="1.4" height="5.4" fill="#2e2e2e"/><rect x="14.75" y="0.5" width="1.4" height="5.4" fill="#2e2e2e"/><rect x="17.50" y="0.5" width="1.4" height="5.4" fill="#2e2e2e"/><rect x="20.25" y="0.5" width="1.4" height="5.4" fill="#2e2e2e"/><rect x="23.00" y="0.5" width="1.4" height="5.4" fill="#2e2e2e"/><rect x="25.75" y="0.5" width="1.4" height="5.4" fill="#2e2e2e"/></svg>
<svg class="a" style="left:1760px;top:623px;" width="28" height="26" viewBox="0 0 28 26">
<rect x="3.3" y="2.5" width="12.4" height="12.5" fill="#c8c8c8"/>
<rect x="10.3" y="9.6" width="14.5" height="14" fill="#c8c8c8"/>
<rect x="10.8" y="10.1" width="4.9" height="4.9" fill="none" stroke="#535353" stroke-width="1"/>
</svg>
<div class="a" style="left:1763.10px;top:662.50px;width:1.50px;height:25.50px;background:#c8c8c8;"></div>
<div class="a" style="left:1766.30px;top:666.60px;width:11.20px;height:7.90px;background:#c8c8c8;"></div>
<div class="a" style="left:1766.30px;top:678.00px;width:18.40px;height:7.00px;background:#c8c8c8;"></div>
<div class="a" style="left:1746.50px;top:698.30px;width:52.10px;height:1.70px;background:#3b3b3b;"></div>
<svg class="a" style="left:1758px;top:704px;" width="30" height="7" viewBox="0 0 30 7"><rect x="1.00" y="0.5" width="1.4" height="5.4" fill="#2e2e2e"/><rect x="3.75" y="0.5" width="1.4" height="5.4" fill="#2e2e2e"/><rect x="6.50" y="0.5" width="1.4" height="5.4" fill="#2e2e2e"/><rect x="9.25" y="0.5" width="1.4" height="5.4" fill="#2e2e2e"/><rect x="12.00" y="0.5" width="1.4" height="5.4" fill="#2e2e2e"/><rect x="14.75" y="0.5" width="1.4" height="5.4" fill="#2e2e2e"/><rect x="17.50" y="0.5" width="1.4" height="5.4" fill="#2e2e2e"/><rect x="20.25" y="0.5" width="1.4" height="5.4" fill="#2e2e2e"/><rect x="23.00" y="0.5" width="1.4" height="5.4" fill="#2e2e2e"/><rect x="25.75" y="0.5" width="1.4" height="5.4" fill="#2e2e2e"/></svg>
<div class="a" style="left:1762.10px;top:724.20px;width:23.80px;height:16.50px;background:linear-gradient(90deg,#000 0%,#777 50%,#fff 100%);box-shadow:0 0 0 1.2px #cfcfcf;"></div>
<div class="a" style="left:1746.50px;top:756.60px;width:52.10px;height:1.70px;background:#3b3b3b;"></div>
<svg class="a" style="left:1758px;top:762px;" width="30" height="7" viewBox="0 0 30 7"><rect x="1.00" y="0.5" width="1.4" height="5.4" fill="#2e2e2e"/><rect x="3.75" y="0.5" width="1.4" height="5.4" fill="#2e2e2e"/><rect x="6.50" y="0.5" width="1.4" height="5.4" fill="#2e2e2e"/><rect x="9.25" y="0.5" width="1.4" height="5.4" fill="#2e2e2e"/><rect x="12.00" y="0.5" width="1.4" height="5.4" fill="#2e2e2e"/><rect x="14.75" y="0.5" width="1.4" height="5.4" fill="#2e2e2e"/><rect x="17.50" y="0.5" width="1.4" height="5.4" fill="#2e2e2e"/><rect x="20.25" y="0.5" width="1.4" height="5.4" fill="#2e2e2e"/><rect x="23.00" y="0.5" width="1.4" height="5.4" fill="#2e2e2e"/><rect x="25.75" y="0.5" width="1.4" height="5.4" fill="#2e2e2e"/></svg>
<svg class="a" style="left:1761px;top:776px;" width="26" height="26" viewBox="0 0 26 26">
<rect x="1" y="0" width="9.8" height="1.3" fill="#1c1c1c"/>
<rect x="10.8" y="2.9" width="14.1" height="1.1" fill="#1c1c1c"/>
<path d="M1.65 24.35 V1.95 H10.15 V4.65 H24.25 V24.35 Z" fill="none" stroke="#bdbdbd" stroke-width="1.3"/>
<path d="M5.2 21 V14 L6.2 13 H8.2 V10.6 L8.9 9.9 H11.1 L11.8 10.6 V13 H14.3 V10.6 L15 9.9 H17.3 L18 10.6 V13 H20 L20.9 14 V21 Z" fill="#ababab"/>
</svg>
<div class="a" style="left:1746.50px;top:814.00px;width:52.10px;height:1.70px;background:#3b3b3b;"></div>
<svg class="a" style="left:1758px;top:820px;" width="30" height="7" viewBox="0 0 30 7"><rect x="1.00" y="0.5" width="1.4" height="5.4" fill="#2e2e2e"/><rect x="3.75" y="0.5" width="1.4" height="5.4" fill="#2e2e2e"/><rect x="6.50" y="0.5" width="1.4" height="5.4" fill="#2e2e2e"/><rect x="9.25" y="0.5" width="1.4" height="5.4" fill="#2e2e2e"/><rect x="12.00" y="0.5" width="1.4" height="5.4" fill="#2e2e2e"/><rect x="14.75" y="0.5" width="1.4" height="5.4" fill="#2e2e2e"/><rect x="17.50" y="0.5" width="1.4" height="5.4" fill="#2e2e2e"/><rect x="20.25" y="0.5" width="1.4" height="5.4" fill="#2e2e2e"/><rect x="23.00" y="0.5" width="1.4" height="5.4" fill="#2e2e2e"/><rect x="25.75" y="0.5" width="1.4" height="5.4" fill="#2e2e2e"/></svg>
<svg class="a" style="left:1760px;top:835px;" width="28" height="28" viewBox="0 0 28 28">
<circle cx="13.9" cy="13.9" r="11.6" fill="none" stroke="#c8c8c8" stroke-width="1.4" stroke-dasharray="3 2.4"/>
<circle cx="13.9" cy="13.9" r="8.8" fill="#c8c8c8"/>
</svg>
<svg class="a" style="left:1760px;top:875px;" width="28" height="28" viewBox="0 0 28 28">
<rect x="8.5" y="3" width="16.7" height="18" fill="none" stroke="#c8c8c8" stroke-width="1.5"/>
<rect x="7" y="13" width="8.5" height="10" fill="#535353"/>
<rect x="7.5" y="15.5" width="6.5" height="6.5" fill="#535353" stroke="#c8c8c8" stroke-width="1.4"/>
<rect x="3" y="11.5" width="6.5" height="6.5" fill="#535353" stroke="#c8c8c8" stroke-width="1.4"/>
</svg>
<div class="a" style="left:1746.50px;top:910.60px;width:52.10px;height:1.70px;background:#3b3b3b;"></div>
</body></html>
